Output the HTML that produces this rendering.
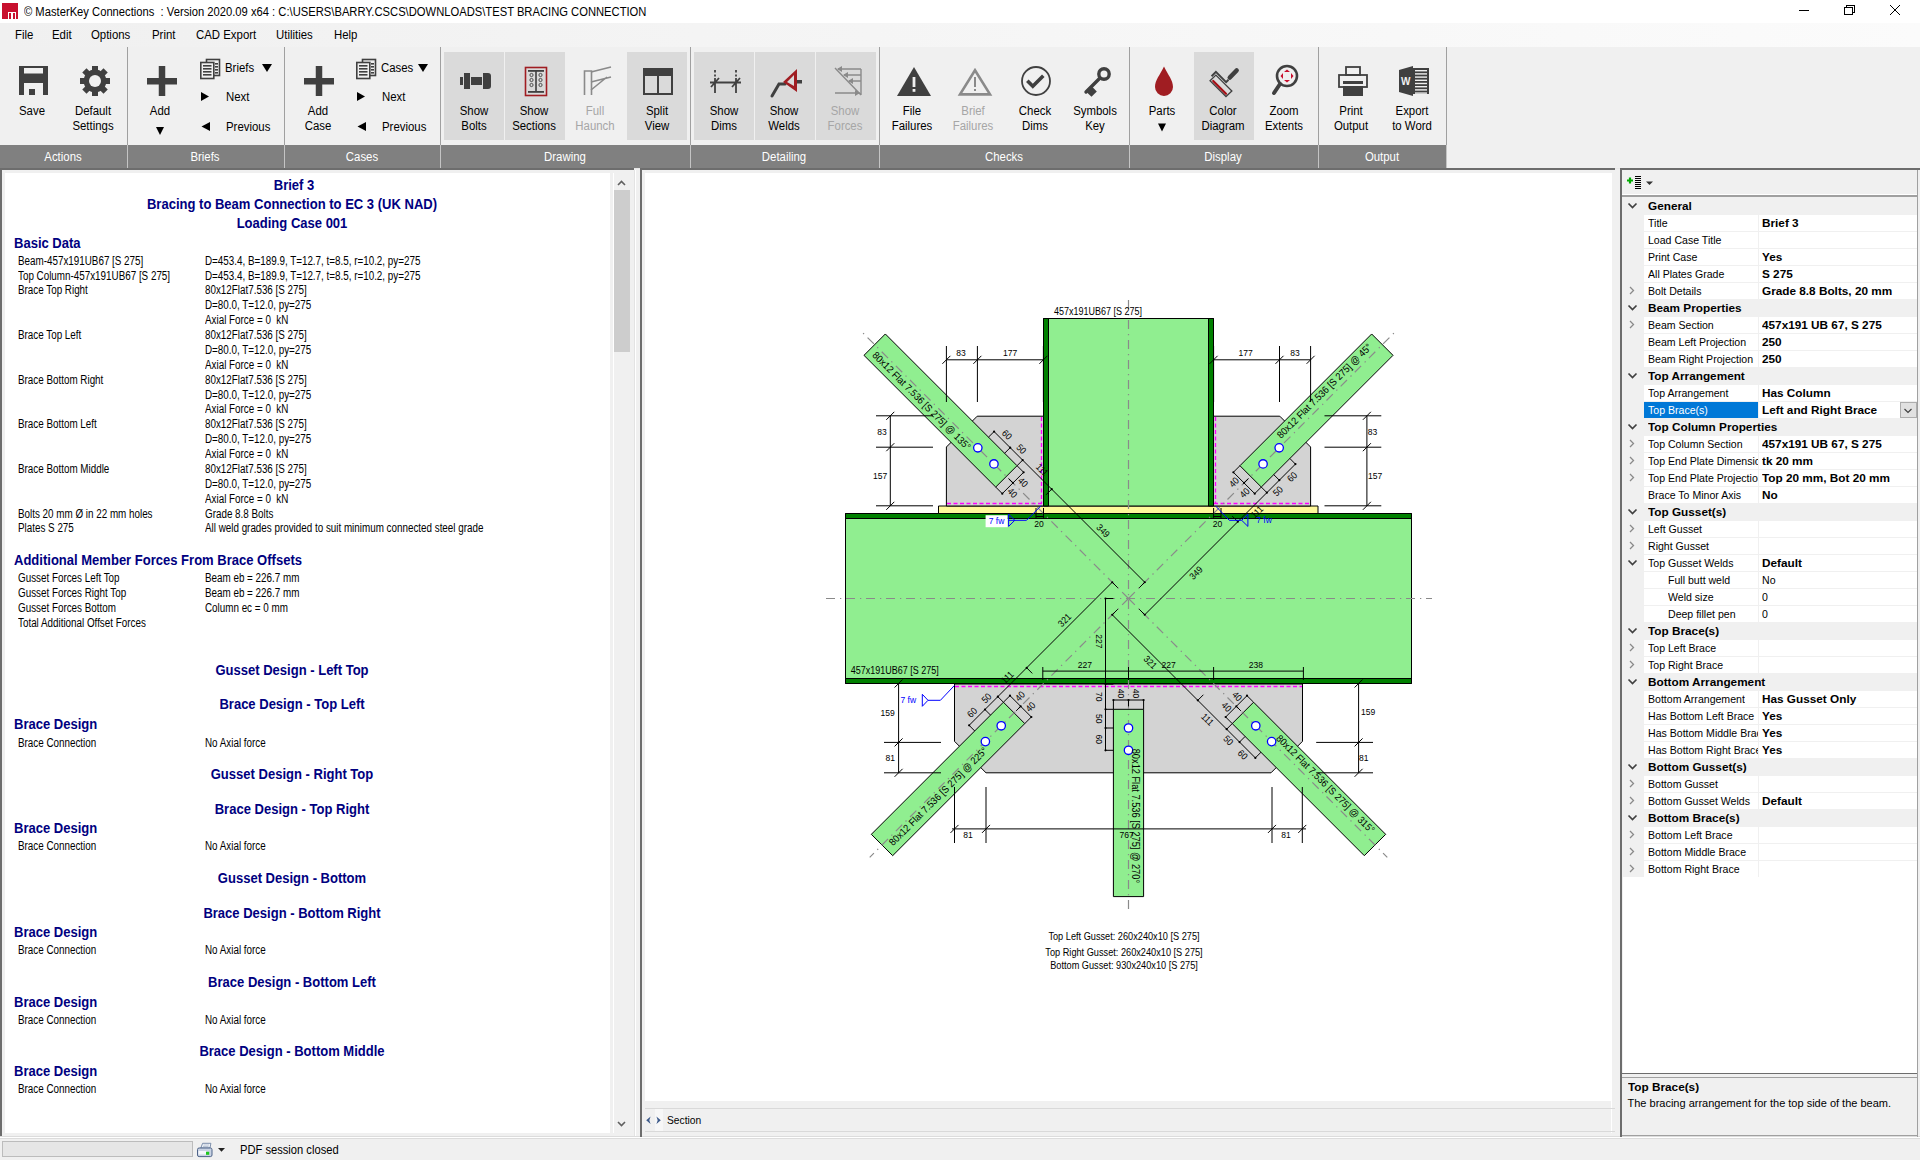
<!DOCTYPE html><html><head><meta charset="utf-8"><title>MasterKey Connections</title><style>
html,body{margin:0;padding:0;}
body{width:1920px;height:1160px;position:relative;overflow:hidden;background:#f0f0f0;font-family:"Liberation Sans",sans-serif;}
.t{position:absolute;white-space:pre;line-height:1;}
.r{position:absolute;}
svg.r{overflow:hidden;}
</style></head><body>
<div class="r" style="left:0px;top:0px;width:1920px;height:23px;background:#fff;"></div>
<svg class="r" style="left:0px;top:0px;" width="24" height="23" viewBox="0 0 24 23"><rect x="2" y="3" width="16" height="16" fill="#c8102e"/><rect x="8" y="12" width="8" height="7" fill="#fff"/><rect x="9" y="13" width="2" height="6" fill="#c8102e"/><rect x="13" y="13" width="2" height="6" fill="#c8102e"/></svg>
<div class="t" style="left:24px;top:5.84px;font-size:12px;transform: scaleX(0.934);transform-origin:left top;">© MasterKey Connections  : Version 2020.09 x64 : C:\USERS\BARRY.CSCS\DOWNLOADS\TEST BRACING CONNECTION</div>
<svg class="r" style="left:1790px;top:0px;" width="130" height="23" viewBox="1790 0 130 23"><g stroke="#000" stroke-width="1" fill="none" shape-rendering="crispEdges"><line x1="1799" y1="10.5" x2="1809" y2="10.5"/><rect x="1844.5" y="7.5" width="8" height="7"/><polyline points="1846.5,7.5 1846.5,5.5 1854.5,5.5 1854.5,12.5 1852.5,12.5"/></g><g stroke="#000" stroke-width="1" fill="none"><line x1="1890" y1="5" x2="1900" y2="15"/><line x1="1900" y1="5" x2="1890" y2="15"/></g></svg>
<div class="r" style="left:0px;top:23px;width:1920px;height:24px;background:linear-gradient(to right,#f0f0f0,#fbfbfb);"></div>
<div class="t" style="left:15px;top:28.84px;font-size:12px;transform: scaleX(0.95);transform-origin:left top;">File</div>
<div class="t" style="left:52px;top:28.84px;font-size:12px;transform: scaleX(0.95);transform-origin:left top;">Edit</div>
<div class="t" style="left:91px;top:28.84px;font-size:12px;transform: scaleX(0.95);transform-origin:left top;">Options</div>
<div class="t" style="left:152px;top:28.84px;font-size:12px;transform: scaleX(0.95);transform-origin:left top;">Print</div>
<div class="t" style="left:196px;top:28.84px;font-size:12px;transform: scaleX(0.95);transform-origin:left top;">CAD Export</div>
<div class="t" style="left:276px;top:28.84px;font-size:12px;transform: scaleX(0.95);transform-origin:left top;">Utilities</div>
<div class="t" style="left:334px;top:28.84px;font-size:12px;transform: scaleX(0.95);transform-origin:left top;">Help</div>
<div class="r" style="left:0px;top:47px;width:1920px;height:98px;background:#f0f0f0;"></div>
<div class="r" style="left:444px;top:52px;width:60px;height:88px;background:#dadada;"></div>
<div class="r" style="left:505px;top:52px;width:60px;height:88px;background:#dadada;"></div>
<div class="r" style="left:627px;top:52px;width:60px;height:88px;background:#dadada;"></div>
<div class="r" style="left:694px;top:52px;width:60px;height:88px;background:#dadada;"></div>
<div class="r" style="left:755px;top:52px;width:60px;height:88px;background:#dadada;"></div>
<div class="r" style="left:816px;top:52px;width:60px;height:88px;background:#dadada;"></div>
<div class="r" style="left:1194px;top:52px;width:60px;height:88px;background:#dadada;"></div>
<div class="r" style="left:0px;top:145px;width:1446px;height:23px;background:#808080;"></div>
<div class="r" style="left:127px;top:47px;width:1px;height:98px;background:#a0a0a0;"></div>
<div class="r" style="left:127px;top:145px;width:1px;height:23px;background:#c4c4c4;"></div>
<div class="r" style="left:284px;top:47px;width:1px;height:98px;background:#a0a0a0;"></div>
<div class="r" style="left:284px;top:145px;width:1px;height:23px;background:#c4c4c4;"></div>
<div class="r" style="left:440px;top:47px;width:1px;height:98px;background:#a0a0a0;"></div>
<div class="r" style="left:440px;top:145px;width:1px;height:23px;background:#c4c4c4;"></div>
<div class="r" style="left:690px;top:47px;width:1px;height:98px;background:#a0a0a0;"></div>
<div class="r" style="left:690px;top:145px;width:1px;height:23px;background:#c4c4c4;"></div>
<div class="r" style="left:879px;top:47px;width:1px;height:98px;background:#a0a0a0;"></div>
<div class="r" style="left:879px;top:145px;width:1px;height:23px;background:#c4c4c4;"></div>
<div class="r" style="left:1129px;top:47px;width:1px;height:98px;background:#a0a0a0;"></div>
<div class="r" style="left:1129px;top:145px;width:1px;height:23px;background:#c4c4c4;"></div>
<div class="r" style="left:1318px;top:47px;width:1px;height:98px;background:#a0a0a0;"></div>
<div class="r" style="left:1318px;top:145px;width:1px;height:23px;background:#c4c4c4;"></div>
<div class="r" style="left:1446px;top:47px;width:1px;height:98px;background:#a0a0a0;"></div>
<div class="r" style="left:1446px;top:145px;width:1px;height:23px;background:#c4c4c4;"></div>
<div class="t" style="left:63px;top:150.84px;font-size:12px;color:#fff;transform:translateX(-50%) scaleX(0.95);transform-origin:center top;">Actions</div>
<div class="t" style="left:205px;top:150.84px;font-size:12px;color:#fff;transform:translateX(-50%) scaleX(0.95);transform-origin:center top;">Briefs</div>
<div class="t" style="left:362px;top:150.84px;font-size:12px;color:#fff;transform:translateX(-50%) scaleX(0.95);transform-origin:center top;">Cases</div>
<div class="t" style="left:565px;top:150.84px;font-size:12px;color:#fff;transform:translateX(-50%) scaleX(0.95);transform-origin:center top;">Drawing</div>
<div class="t" style="left:784px;top:150.84px;font-size:12px;color:#fff;transform:translateX(-50%) scaleX(0.95);transform-origin:center top;">Detailing</div>
<div class="t" style="left:1004px;top:150.84px;font-size:12px;color:#fff;transform:translateX(-50%) scaleX(0.95);transform-origin:center top;">Checks</div>
<div class="t" style="left:1223px;top:150.84px;font-size:12px;color:#fff;transform:translateX(-50%) scaleX(0.95);transform-origin:center top;">Display</div>
<div class="t" style="left:1382px;top:150.84px;font-size:12px;color:#fff;transform:translateX(-50%) scaleX(0.95);transform-origin:center top;">Output</div>
<div class="t" style="left:32px;top:105.34px;font-size:12px;transform:translateX(-50%) scaleX(0.95);transform-origin:center top;">Save</div>
<div class="t" style="left:93px;top:105.34px;font-size:12px;transform:translateX(-50%) scaleX(0.95);transform-origin:center top;">Default</div>
<div class="t" style="left:93px;top:120.34px;font-size:12px;transform:translateX(-50%) scaleX(0.95);transform-origin:center top;">Settings</div>
<div class="t" style="left:160px;top:105.34px;font-size:12px;transform:translateX(-50%) scaleX(0.95);transform-origin:center top;">Add</div>
<div class="t" style="left:318px;top:105.34px;font-size:12px;transform:translateX(-50%) scaleX(0.95);transform-origin:center top;">Add</div>
<div class="t" style="left:318px;top:120.34px;font-size:12px;transform:translateX(-50%) scaleX(0.95);transform-origin:center top;">Case</div>
<div class="t" style="left:474px;top:105.34px;font-size:12px;transform:translateX(-50%) scaleX(0.95);transform-origin:center top;">Show</div>
<div class="t" style="left:474px;top:120.34px;font-size:12px;transform:translateX(-50%) scaleX(0.95);transform-origin:center top;">Bolts</div>
<div class="t" style="left:534px;top:105.34px;font-size:12px;transform:translateX(-50%) scaleX(0.95);transform-origin:center top;">Show</div>
<div class="t" style="left:534px;top:120.34px;font-size:12px;transform:translateX(-50%) scaleX(0.95);transform-origin:center top;">Sections</div>
<div class="t" style="left:595px;top:105.34px;font-size:12px;color:#a6a6a6;transform:translateX(-50%) scaleX(0.95);transform-origin:center top;">Full</div>
<div class="t" style="left:595px;top:120.34px;font-size:12px;color:#a6a6a6;transform:translateX(-50%) scaleX(0.95);transform-origin:center top;">Haunch</div>
<div class="t" style="left:657px;top:105.34px;font-size:12px;transform:translateX(-50%) scaleX(0.95);transform-origin:center top;">Split</div>
<div class="t" style="left:657px;top:120.34px;font-size:12px;transform:translateX(-50%) scaleX(0.95);transform-origin:center top;">View</div>
<div class="t" style="left:724px;top:105.34px;font-size:12px;transform:translateX(-50%) scaleX(0.95);transform-origin:center top;">Show</div>
<div class="t" style="left:724px;top:120.34px;font-size:12px;transform:translateX(-50%) scaleX(0.95);transform-origin:center top;">Dims</div>
<div class="t" style="left:784px;top:105.34px;font-size:12px;transform:translateX(-50%) scaleX(0.95);transform-origin:center top;">Show</div>
<div class="t" style="left:784px;top:120.34px;font-size:12px;transform:translateX(-50%) scaleX(0.95);transform-origin:center top;">Welds</div>
<div class="t" style="left:845px;top:105.34px;font-size:12px;color:#a6a6a6;transform:translateX(-50%) scaleX(0.95);transform-origin:center top;">Show</div>
<div class="t" style="left:845px;top:120.34px;font-size:12px;color:#a6a6a6;transform:translateX(-50%) scaleX(0.95);transform-origin:center top;">Forces</div>
<div class="t" style="left:912px;top:105.34px;font-size:12px;transform:translateX(-50%) scaleX(0.95);transform-origin:center top;">File</div>
<div class="t" style="left:912px;top:120.34px;font-size:12px;transform:translateX(-50%) scaleX(0.95);transform-origin:center top;">Failures</div>
<div class="t" style="left:973px;top:105.34px;font-size:12px;color:#a6a6a6;transform:translateX(-50%) scaleX(0.95);transform-origin:center top;">Brief</div>
<div class="t" style="left:973px;top:120.34px;font-size:12px;color:#a6a6a6;transform:translateX(-50%) scaleX(0.95);transform-origin:center top;">Failures</div>
<div class="t" style="left:1035px;top:105.34px;font-size:12px;transform:translateX(-50%) scaleX(0.95);transform-origin:center top;">Check</div>
<div class="t" style="left:1035px;top:120.34px;font-size:12px;transform:translateX(-50%) scaleX(0.95);transform-origin:center top;">Dims</div>
<div class="t" style="left:1095px;top:105.34px;font-size:12px;transform:translateX(-50%) scaleX(0.95);transform-origin:center top;">Symbols</div>
<div class="t" style="left:1095px;top:120.34px;font-size:12px;transform:translateX(-50%) scaleX(0.95);transform-origin:center top;">Key</div>
<div class="t" style="left:1162px;top:105.34px;font-size:12px;transform:translateX(-50%) scaleX(0.95);transform-origin:center top;">Parts</div>
<div class="t" style="left:1223px;top:105.34px;font-size:12px;transform:translateX(-50%) scaleX(0.95);transform-origin:center top;">Color</div>
<div class="t" style="left:1223px;top:120.34px;font-size:12px;transform:translateX(-50%) scaleX(0.95);transform-origin:center top;">Diagram</div>
<div class="t" style="left:1284px;top:105.34px;font-size:12px;transform:translateX(-50%) scaleX(0.95);transform-origin:center top;">Zoom</div>
<div class="t" style="left:1284px;top:120.34px;font-size:12px;transform:translateX(-50%) scaleX(0.95);transform-origin:center top;">Extents</div>
<div class="t" style="left:1351px;top:105.34px;font-size:12px;transform:translateX(-50%) scaleX(0.95);transform-origin:center top;">Print</div>
<div class="t" style="left:1351px;top:120.34px;font-size:12px;transform:translateX(-50%) scaleX(0.95);transform-origin:center top;">Output</div>
<div class="t" style="left:1412px;top:105.34px;font-size:12px;transform:translateX(-50%) scaleX(0.95);transform-origin:center top;">Export</div>
<div class="t" style="left:1412px;top:120.34px;font-size:12px;transform:translateX(-50%) scaleX(0.95);transform-origin:center top;">to Word</div>
<div class="t" style="left:225px;top:61.84px;font-size:12px;transform: scaleX(0.95);transform-origin:left top;">Briefs</div>
<div class="t" style="left:226px;top:90.84px;font-size:12px;transform: scaleX(0.95);transform-origin:left top;">Next</div>
<div class="t" style="left:226px;top:120.84px;font-size:12px;transform: scaleX(0.95);transform-origin:left top;">Previous</div>
<div class="t" style="left:381px;top:61.84px;font-size:12px;transform: scaleX(0.95);transform-origin:left top;">Cases</div>
<div class="t" style="left:382px;top:90.84px;font-size:12px;transform: scaleX(0.95);transform-origin:left top;">Next</div>
<div class="t" style="left:382px;top:120.84px;font-size:12px;transform: scaleX(0.95);transform-origin:left top;">Previous</div>
<svg class="r" style="left:0px;top:47px;" width="1446" height="98" viewBox="0 47 1446 98"><path d="M19 66h29v29h-29z M24 68v5.6h19v-5.6z M24 83v12h19v-12z" fill="#404040" fill-rule="evenodd"/><rect x="29" y="89" width="6" height="6" fill="#404040"/><g fill="#404040"><rect x="92" y="66" width="6" height="8" transform="rotate(0 95 81)"/><rect x="92" y="66" width="6" height="8" transform="rotate(45 95 81)"/><rect x="92" y="66" width="6" height="8" transform="rotate(90 95 81)"/><rect x="92" y="66" width="6" height="8" transform="rotate(135 95 81)"/><rect x="92" y="66" width="6" height="8" transform="rotate(180 95 81)"/><rect x="92" y="66" width="6" height="8" transform="rotate(225 95 81)"/><rect x="92" y="66" width="6" height="8" transform="rotate(270 95 81)"/><rect x="92" y="66" width="6" height="8" transform="rotate(315 95 81)"/><circle cx="95" cy="81" r="11.4"/></g><circle cx="95" cy="81" r="6" fill="#f0f0f0"/><rect x="147" y="78" width="30" height="6.5" fill="#404040"/><rect x="158.75" y="66" width="6.5" height="30" fill="#404040"/><rect x="304" y="78" width="30" height="6.5" fill="#404040"/><rect x="315.75" y="66" width="6.5" height="30" fill="#404040"/><path d="M156 127h8l-4 8z" fill="#000"/><path d="M1158 123.5h8l-4 8z" fill="#000"/><rect x="206.5" y="59.5" width="13" height="16" fill="#f0f0f0" stroke="#404040" stroke-width="1.6"/><rect x="200.8" y="62.5" width="13" height="16" fill="#f0f0f0" stroke="#404040" stroke-width="1.6"/><rect x="203" y="65" width="8.5" height="1.6" fill="#404040"/><rect x="203" y="68" width="8.5" height="1.6" fill="#404040"/><rect x="203" y="71" width="8.5" height="1.6" fill="#404040"/><rect x="203" y="74" width="8.5" height="1.6" fill="#404040"/><rect x="215" y="63" width="3" height="1.6" fill="#404040"/><rect x="215" y="66" width="3" height="1.6" fill="#404040"/><rect x="215" y="69" width="3" height="1.6" fill="#404040"/><rect x="215" y="72" width="3" height="1.6" fill="#404040"/><path d="M262 64h10l-5 8z" fill="#000"/><path d="M201 92v9l8-4.5z" fill="#000"/><path d="M210 122v9l-8.5-4.5z" fill="#000"/><rect x="362.5" y="59.5" width="13" height="16" fill="#f0f0f0" stroke="#404040" stroke-width="1.6"/><rect x="356.8" y="62.5" width="13" height="16" fill="#f0f0f0" stroke="#404040" stroke-width="1.6"/><rect x="359" y="65" width="8.5" height="1.6" fill="#404040"/><rect x="359" y="68" width="8.5" height="1.6" fill="#404040"/><rect x="359" y="71" width="8.5" height="1.6" fill="#404040"/><rect x="359" y="74" width="8.5" height="1.6" fill="#404040"/><rect x="371" y="63" width="3" height="1.6" fill="#404040"/><rect x="371" y="66" width="3" height="1.6" fill="#404040"/><rect x="371" y="69" width="3" height="1.6" fill="#404040"/><rect x="371" y="72" width="3" height="1.6" fill="#404040"/><path d="M418 64h10l-5 8z" fill="#000"/><path d="M357 92v9l8-4.5z" fill="#000"/><path d="M366 122v9l-8.5-4.5z" fill="#000"/><rect x="460" y="77" width="3" height="8" fill="#404040"/><rect x="464" y="73" width="6" height="16" fill="#404040"/><rect x="471" y="77" width="11" height="8" fill="#404040"/><path d="M483 73h5a3 3 0 0 1 3 3v10a3 3 0 0 1-3 3h-5z" fill="#404040"/><rect x="525.5" y="67.5" width="21" height="28" fill="none" stroke="#a01d22" stroke-width="1.6"/><rect x="528" y="70" width="16" height="1.8" fill="#404040"/><rect x="528" y="91" width="16" height="1.8" fill="#404040"/><rect x="535.2" y="71" width="1.6" height="21" fill="#404040"/><circle cx="531.5" cy="75" r="1.6" fill="none" stroke="#404040" stroke-width="0.9"/><circle cx="531.5" cy="80" r="1.6" fill="none" stroke="#404040" stroke-width="0.9"/><circle cx="531.5" cy="85" r="1.6" fill="none" stroke="#404040" stroke-width="0.9"/><circle cx="540.5" cy="75" r="1.6" fill="none" stroke="#404040" stroke-width="0.9"/><circle cx="540.5" cy="80" r="1.6" fill="none" stroke="#404040" stroke-width="0.9"/><circle cx="540.5" cy="85" r="1.6" fill="none" stroke="#404040" stroke-width="0.9"/><g fill="none" stroke="#8a8a8a" stroke-width="1.6"><path d="M584.5 95V71h7v24"/><path d="M591 72l20-5M591 82l20-5M591 90l16-13"/></g><rect x="643" y="68" width="30" height="27" fill="#404040"/><rect x="645" y="76" width="12" height="17" fill="#dadada"/><rect x="659" y="76" width="12" height="17" fill="#dadada"/><g stroke="#404040" stroke-width="1.8" fill="none"><path d="M710 82.5h31M715 70v2.5M715 74.5v2M715 78v15M736 70v2.5M736 74.5v2M736 78v15M711 87l8-9M732 87l8-9"/></g><path d="M772 96l7-12h6" fill="none" stroke="#404040" stroke-width="3" stroke-linecap="round"/><path d="M797 69l0 23l-14-10z M794 75l-7 7l7 4z" fill="#a01d22" fill-rule="evenodd"/><rect x="797" y="80" width="5" height="3.5" fill="#404040"/><g fill="none" stroke="#8a8a8a" stroke-width="1.4"><path d="M835 68l26 27M861 69v26M838 69h23M844 75h17M849 81h12M835 93h25"/></g><g fill="#8a8a8a"><path d="M837 69l5-3v6z M843 75l5-3v6z M848 81l5-3v6z M860 93l-5-3v6z"/></g><path d="M914 67l17 29h-34z" fill="#404040"/><rect x="912.6" y="77" width="2.8" height="10" fill="#f0f0f0"/><rect x="912.6" y="89" width="2.8" height="2.8" fill="#f0f0f0"/><path d="M975 70.2L990 94.4H960Z" fill="none" stroke="#8a8a8a" stroke-width="2.6" stroke-linejoin="miter"/><rect x="974" y="77" width="2" height="10" fill="#8a8a8a"/><rect x="974" y="89" width="2" height="2" fill="#8a8a8a"/><circle cx="1036" cy="81" r="14" fill="none" stroke="#404040" stroke-width="1.8"/><path d="M1027.3 80.8l5.5 5.5l10.5-10.5" fill="none" stroke="#404040" stroke-width="3.6"/><circle cx="1104" cy="74" r="5.2" fill="none" stroke="#404040" stroke-width="3.4"/><path d="M1100 78l-14 14" stroke="#404040" stroke-width="3.4" stroke-linecap="round"/><rect x="0" y="-3.8" width="7" height="7.6" fill="#404040" transform="translate(1089.2 89.2) rotate(45)"/><path d="M1164 66.5C1160 75 1155 80 1155 87a9 9 0 0 0 18 0c0-7-5-12-9-20.5z" fill="#a01d22"/><polygon points="1210.05,80.76 1215.9,75.07 1231.87,91 1226,96.5" fill="#dadada" stroke="#404040" stroke-width="1.3"/><line x1="1213.2" y1="81" x2="1226" y2="93.8" stroke="#a50f15" stroke-width="2.2" stroke-linecap="round"/><path d="M1211.6 76.3L1215.9 71.9L1226.1 82.1L1228.5 79.7" fill="none" stroke="#404040" stroke-width="2"/><line x1="1229.8" y1="77.5" x2="1236.6" y2="70.5" stroke="#404040" stroke-width="4.6" stroke-linecap="round"/><circle cx="1287" cy="76" r="10" fill="none" stroke="#404040" stroke-width="2.6"/><path d="M1280 84l-6 9" stroke="#404040" stroke-width="4" stroke-linecap="round"/><path d="M1287 69.5l3 2.5h-6z M1287 82.5l3-2.5h-6z M1280.5 76l2.5-3v6z M1293.5 76l-2.5-3v6z" fill="#c8102e"/><rect x="1346" y="67" width="14" height="8" fill="none" stroke="#404040" stroke-width="1.8"/><rect x="1339" y="75" width="28" height="12" fill="none" stroke="#404040" stroke-width="1.8"/><rect x="1343" y="81" width="20" height="3" fill="#404040"/><rect x="1343" y="86" width="20" height="10" fill="#404040"/><path d="M1399 70l14-4v30l-14-4z" fill="#404040"/><rect x="1413" y="68" width="16" height="26" fill="#404040"/><rect x="1415" y="70.0" width="12" height="1.4" fill="#f0f0f0"/><rect x="1415" y="73.2" width="12" height="1.4" fill="#f0f0f0"/><rect x="1415" y="76.4" width="12" height="1.4" fill="#f0f0f0"/><rect x="1415" y="79.6" width="12" height="1.4" fill="#f0f0f0"/><rect x="1415" y="82.8" width="12" height="1.4" fill="#f0f0f0"/><rect x="1415" y="86.0" width="12" height="1.4" fill="#f0f0f0"/><rect x="1415" y="89.2" width="12" height="1.4" fill="#f0f0f0"/><rect x="1415" y="92.4" width="12" height="1.4" fill="#f0f0f0"/><text x="1401" y="85" font-family="Liberation Sans" font-size="10" font-weight="bold" fill="#f0f0f0">W</text></svg>
<div class="r" style="left:0px;top:168px;width:1920px;height:1px;background:#e8e8e8;"></div>
<div class="r" style="left:0px;top:168px;width:634px;height:2px;background:#6d6d6d;"></div>
<div class="r" style="left:0px;top:168px;width:2px;height:969px;background:#6d6d6d;"></div>
<div class="r" style="left:5px;top:173px;width:605px;height:960px;background:#fff;"></div>
<div class="r" style="left:613px;top:173px;width:1px;height:960px;background:#fff;"></div>
<div class="r" style="left:634px;top:170px;width:1px;height:967px;background:#e3e3e3;"></div>
<div class="r" style="left:635px;top:170px;width:1px;height:967px;background:#fff;"></div>
<div class="r" style="left:614px;top:190px;width:16px;height:162px;background:#cdcdcd;"></div>
<svg class="r" style="left:610px;top:170px;" width="30" height="970" viewBox="610 170 30 970"><path d="M618 185l3.5-3.5l3.5 3.5" fill="none" stroke="#606060" stroke-width="1.6"/><path d="M618 1122l3.5 3.5l3.5-3.5" fill="none" stroke="#606060" stroke-width="1.6"/></svg>
<div class="r" style="left:0px;top:1136px;width:1920px;height:1px;background:#dcdcdc;"></div>
<div class="r" style="left:0px;top:1137px;width:1920px;height:1px;background:#fff;"></div>
<div class="r" style="left:0px;top:1138px;width:1920px;height:1px;background:#dcdcdc;"></div>
<div class="r" style="left:640px;top:168px;width:975px;height:2px;background:#6d6d6d;"></div>
<div class="r" style="left:640px;top:168px;width:2px;height:969px;background:#6d6d6d;"></div>
<div class="r" style="left:645px;top:173px;width:966px;height:928px;background:#fff;"></div>
<div class="r" style="left:1611px;top:173px;width:1px;height:960px;background:#fff;"></div>
<div class="r" style="left:645px;top:1108px;width:970px;height:1px;background:#d9d9d9;"></div>
<div class="r" style="left:645px;top:1131px;width:970px;height:1px;background:#d9d9d9;"></div>
<div class="r" style="left:655px;top:1109px;width:8px;height:22px;background:#f7f7f7;"></div>
<svg class="r" style="left:645px;top:1108px;" width="60" height="24" viewBox="645 1108 60 24"><path d="M650.6 1116.5L646.2 1120.2L650.6 1123.9L649.3 1120.2Z" fill="#3d5a8a"/><path d="M656.4 1116.5L660.8 1120.2L656.4 1123.9L657.7 1120.2Z" fill="#3d5a8a"/></svg>
<div class="t" style="left:667px;top:1115.49px;font-size:11px;transform: scaleX(0.93);transform-origin:left top;">Section</div>
<div class="r" style="left:1620px;top:168px;width:300px;height:2px;background:#6d6d6d;"></div>
<div class="r" style="left:1620px;top:168px;width:2px;height:969px;background:#6d6d6d;"></div>
<div class="r" style="left:1917px;top:170px;width:1px;height:967px;background:#a0a0a0;"></div>
<div class="r" style="left:1622px;top:194px;width:295px;height:1px;background:#fff;"></div>
<div class="r" style="left:1622px;top:195px;width:295px;height:2px;background:#a0a0a0;"></div>
<div class="r" style="left:1623px;top:197px;width:294px;height:876px;background:#fff;"></div>
<div class="r" style="left:1622px;top:1073px;width:295px;height:1px;background:#6d6d6d;"></div>
<div class="r" style="left:1622px;top:1077px;width:296px;height:1px;background:#a0a0a0;"></div>
<div class="r" style="left:1622px;top:1135px;width:296px;height:1px;background:#a0a0a0;"></div>
<svg class="r" style="left:1622px;top:170px;" width="50" height="25" viewBox="1622 170 50 25"><path d="M1627 180.5h6M1630 177.5v6" stroke="#0a0" stroke-width="2.2"/><rect x="1635" y="176" width="6" height="1" fill="#000"/><rect x="1635" y="178" width="6" height="1" fill="#000"/><rect x="1635" y="180" width="6" height="1" fill="#000"/><rect x="1635" y="182" width="6" height="1" fill="#000"/><rect x="1635" y="184" width="6" height="1" fill="#000"/><rect x="1635" y="186" width="6" height="1" fill="#000"/><rect x="1635" y="188" width="6" height="1" fill="#000"/><path d="M1646 181.5h7l-3.5 3.5z" fill="#333"/></svg>
<div class="r" style="left:2px;top:1141px;width:191px;height:16px;background:#e6e6e6;box-sizing:border-box;border:1px solid #bcbcbc;"></div>
<svg class="r" style="left:195px;top:1139px;" width="40" height="20" viewBox="195 1139 40 20"><path d="M200.8 1148L202.6 1143.3H210.9L210 1148Z" fill="#eef2f8" stroke="#6f83a3" stroke-width="0.9"/><path d="M203.5 1145h5.5M203 1146.5h5.5" stroke="#9aa8c0" stroke-width="0.6"/><rect x="197.5" y="1148" width="14.5" height="8.6" rx="1.6" fill="#c9d3e3" stroke="#4d6288" stroke-width="1"/><rect x="198.5" y="1151" width="8" height="3.5" fill="#f4f6fb"/><rect x="206" y="1151.8" width="3.2" height="3" fill="#1ec81e"/><path d="M218 1148h7l-3.5 3.8z" fill="#222"/></svg>
<div class="t" style="left:240px;top:1143.84px;font-size:12px;transform: scaleX(0.93);transform-origin:left top;">PDF session closed</div>
<div class="t" style="left:293.5px;top:177.75px;font-size:14px;color:#000080;font-weight:bold;transform:translateX(-50%) scaleX(0.93);transform-origin:center top;">Brief 3</div>
<div class="t" style="left:291.5px;top:197.35px;font-size:14px;color:#000080;font-weight:bold;transform:translateX(-50%) scaleX(0.93);transform-origin:center top;">Bracing to Beam Connection to EC 3 (UK NAD)</div>
<div class="t" style="left:291.5px;top:216.45px;font-size:14px;color:#000080;font-weight:bold;transform:translateX(-50%) scaleX(0.93);transform-origin:center top;">Loading Case 001</div>
<div class="t" style="left:13.5px;top:236.05px;font-size:14px;color:#000080;font-weight:bold;transform: scaleX(0.93);transform-origin:left top;">Basic Data</div>
<div class="t" style="left:18px;top:254.74px;font-size:12px;transform: scaleX(0.82);transform-origin:left top;">Beam-457x191UB67 [S 275]</div>
<div class="t" style="left:205px;top:254.74px;font-size:12px;transform: scaleX(0.82);transform-origin:left top;">D=453.4, B=189.9, T=12.7, t=8.5, r=10.2, py=275</div>
<div class="t" style="left:18px;top:269.61px;font-size:12px;transform: scaleX(0.82);transform-origin:left top;">Top Column-457x191UB67 [S 275]</div>
<div class="t" style="left:205px;top:269.61px;font-size:12px;transform: scaleX(0.82);transform-origin:left top;">D=453.4, B=189.9, T=12.7, t=8.5, r=10.2, py=275</div>
<div class="t" style="left:18px;top:284.48px;font-size:12px;transform: scaleX(0.82);transform-origin:left top;">Brace Top Right</div>
<div class="t" style="left:205px;top:284.48px;font-size:12px;transform: scaleX(0.82);transform-origin:left top;">80x12Flat7.536 [S 275]</div>
<div class="t" style="left:205px;top:299.35px;font-size:12px;transform: scaleX(0.82);transform-origin:left top;">D=80.0, T=12.0, py=275</div>
<div class="t" style="left:205px;top:314.22px;font-size:12px;transform: scaleX(0.82);transform-origin:left top;">Axial Force = 0  kN</div>
<div class="t" style="left:18px;top:329.09px;font-size:12px;transform: scaleX(0.82);transform-origin:left top;">Brace Top Left</div>
<div class="t" style="left:205px;top:329.09px;font-size:12px;transform: scaleX(0.82);transform-origin:left top;">80x12Flat7.536 [S 275]</div>
<div class="t" style="left:205px;top:343.96px;font-size:12px;transform: scaleX(0.82);transform-origin:left top;">D=80.0, T=12.0, py=275</div>
<div class="t" style="left:205px;top:358.83px;font-size:12px;transform: scaleX(0.82);transform-origin:left top;">Axial Force = 0  kN</div>
<div class="t" style="left:18px;top:373.70px;font-size:12px;transform: scaleX(0.82);transform-origin:left top;">Brace Bottom Right</div>
<div class="t" style="left:205px;top:373.70px;font-size:12px;transform: scaleX(0.82);transform-origin:left top;">80x12Flat7.536 [S 275]</div>
<div class="t" style="left:205px;top:388.57px;font-size:12px;transform: scaleX(0.82);transform-origin:left top;">D=80.0, T=12.0, py=275</div>
<div class="t" style="left:205px;top:403.44px;font-size:12px;transform: scaleX(0.82);transform-origin:left top;">Axial Force = 0  kN</div>
<div class="t" style="left:18px;top:418.31px;font-size:12px;transform: scaleX(0.82);transform-origin:left top;">Brace Bottom Left</div>
<div class="t" style="left:205px;top:418.31px;font-size:12px;transform: scaleX(0.82);transform-origin:left top;">80x12Flat7.536 [S 275]</div>
<div class="t" style="left:205px;top:433.18px;font-size:12px;transform: scaleX(0.82);transform-origin:left top;">D=80.0, T=12.0, py=275</div>
<div class="t" style="left:205px;top:448.05px;font-size:12px;transform: scaleX(0.82);transform-origin:left top;">Axial Force = 0  kN</div>
<div class="t" style="left:18px;top:462.92px;font-size:12px;transform: scaleX(0.82);transform-origin:left top;">Brace Bottom Middle</div>
<div class="t" style="left:205px;top:462.92px;font-size:12px;transform: scaleX(0.82);transform-origin:left top;">80x12Flat7.536 [S 275]</div>
<div class="t" style="left:205px;top:477.79px;font-size:12px;transform: scaleX(0.82);transform-origin:left top;">D=80.0, T=12.0, py=275</div>
<div class="t" style="left:205px;top:492.66px;font-size:12px;transform: scaleX(0.82);transform-origin:left top;">Axial Force = 0  kN</div>
<div class="t" style="left:18px;top:507.53px;font-size:12px;transform: scaleX(0.82);transform-origin:left top;">Bolts 20 mm Ø in 22 mm holes</div>
<div class="t" style="left:205px;top:507.53px;font-size:12px;transform: scaleX(0.82);transform-origin:left top;">Grade 8.8 Bolts</div>
<div class="t" style="left:18px;top:522.40px;font-size:12px;transform: scaleX(0.82);transform-origin:left top;">Plates S 275</div>
<div class="t" style="left:205px;top:522.40px;font-size:12px;transform: scaleX(0.82);transform-origin:left top;">All weld grades provided to suit minimum connected steel grade</div>
<div class="t" style="left:13.5px;top:553.15px;font-size:14px;color:#000080;font-weight:bold;transform: scaleX(0.93);transform-origin:left top;">Additional Member Forces From Brace Offsets</div>
<div class="t" style="left:18px;top:572.34px;font-size:12px;transform: scaleX(0.82);transform-origin:left top;">Gusset Forces Left Top</div>
<div class="t" style="left:205px;top:572.34px;font-size:12px;transform: scaleX(0.82);transform-origin:left top;">Beam eb = 226.7 mm</div>
<div class="t" style="left:18px;top:587.07px;font-size:12px;transform: scaleX(0.82);transform-origin:left top;">Gusset Forces Right Top</div>
<div class="t" style="left:205px;top:587.07px;font-size:12px;transform: scaleX(0.82);transform-origin:left top;">Beam eb = 226.7 mm</div>
<div class="t" style="left:18px;top:601.80px;font-size:12px;transform: scaleX(0.82);transform-origin:left top;">Gusset Forces Bottom</div>
<div class="t" style="left:205px;top:601.80px;font-size:12px;transform: scaleX(0.82);transform-origin:left top;">Column ec = 0 mm</div>
<div class="t" style="left:18px;top:616.53px;font-size:12px;transform: scaleX(0.82);transform-origin:left top;">Total Additional Offset Forces</div>
<div class="t" style="left:291.5px;top:663.15px;font-size:14px;color:#000080;font-weight:bold;transform:translateX(-50%) scaleX(0.93);transform-origin:center top;">Gusset Design - Left Top</div>
<div class="t" style="left:291.5px;top:697.45px;font-size:14px;color:#000080;font-weight:bold;transform:translateX(-50%) scaleX(0.93);transform-origin:center top;">Brace Design - Top Left</div>
<div class="t" style="left:13.5px;top:717.45px;font-size:14px;color:#000080;font-weight:bold;transform: scaleX(0.93);transform-origin:left top;">Brace Design</div>
<div class="t" style="left:18px;top:736.54px;font-size:12px;transform: scaleX(0.82);transform-origin:left top;">Brace Connection</div>
<div class="t" style="left:205px;top:736.54px;font-size:12px;transform: scaleX(0.82);transform-origin:left top;">No Axial force</div>
<div class="t" style="left:291.5px;top:767.45px;font-size:14px;color:#000080;font-weight:bold;transform:translateX(-50%) scaleX(0.93);transform-origin:center top;">Gusset Design - Right Top</div>
<div class="t" style="left:291.5px;top:802.15px;font-size:14px;color:#000080;font-weight:bold;transform:translateX(-50%) scaleX(0.93);transform-origin:center top;">Brace Design - Top Right</div>
<div class="t" style="left:13.5px;top:821.45px;font-size:14px;color:#000080;font-weight:bold;transform: scaleX(0.93);transform-origin:left top;">Brace Design</div>
<div class="t" style="left:18px;top:839.84px;font-size:12px;transform: scaleX(0.82);transform-origin:left top;">Brace Connection</div>
<div class="t" style="left:205px;top:839.84px;font-size:12px;transform: scaleX(0.82);transform-origin:left top;">No Axial force</div>
<div class="t" style="left:291.5px;top:871.45px;font-size:14px;color:#000080;font-weight:bold;transform:translateX(-50%) scaleX(0.93);transform-origin:center top;">Gusset Design - Bottom</div>
<div class="t" style="left:291.5px;top:906.45px;font-size:14px;color:#000080;font-weight:bold;transform:translateX(-50%) scaleX(0.93);transform-origin:center top;">Brace Design - Bottom Right</div>
<div class="t" style="left:13.5px;top:924.85px;font-size:14px;color:#000080;font-weight:bold;transform: scaleX(0.93);transform-origin:left top;">Brace Design</div>
<div class="t" style="left:18px;top:944.24px;font-size:12px;transform: scaleX(0.82);transform-origin:left top;">Brace Connection</div>
<div class="t" style="left:205px;top:944.24px;font-size:12px;transform: scaleX(0.82);transform-origin:left top;">No Axial force</div>
<div class="t" style="left:291.5px;top:975.15px;font-size:14px;color:#000080;font-weight:bold;transform:translateX(-50%) scaleX(0.93);transform-origin:center top;">Brace Design - Bottom Left</div>
<div class="t" style="left:13.5px;top:995.05px;font-size:14px;color:#000080;font-weight:bold;transform: scaleX(0.93);transform-origin:left top;">Brace Design</div>
<div class="t" style="left:18px;top:1014.34px;font-size:12px;transform: scaleX(0.82);transform-origin:left top;">Brace Connection</div>
<div class="t" style="left:205px;top:1014.34px;font-size:12px;transform: scaleX(0.82);transform-origin:left top;">No Axial force</div>
<div class="t" style="left:291.5px;top:1043.75px;font-size:14px;color:#000080;font-weight:bold;transform:translateX(-50%) scaleX(0.93);transform-origin:center top;">Brace Design - Bottom Middle</div>
<div class="t" style="left:13.5px;top:1064.35px;font-size:14px;color:#000080;font-weight:bold;transform: scaleX(0.93);transform-origin:left top;">Brace Design</div>
<div class="t" style="left:18px;top:1082.94px;font-size:12px;transform: scaleX(0.82);transform-origin:left top;">Brace Connection</div>
<div class="t" style="left:205px;top:1082.94px;font-size:12px;transform: scaleX(0.82);transform-origin:left top;">No Axial force</div>
<div class="r" style="left:1623px;top:197px;width:294px;height:17px;background:#f0f0f0;"></div>
<div class="t" style="left:1648px;top:201.19px;font-size:11px;font-weight:bold;transform: scaleX(1.07);transform-origin:left top;">General</div>
<div class="r" style="left:1623px;top:214px;width:21px;height:17px;background:#f0f0f0;"></div>
<div class="r" style="left:1644px;top:214px;width:273px;height:1px;background:#f0f0f0;"></div>
<div class="r" style="left:1758px;top:214px;width:1px;height:17px;background:#f0f0f0;"></div>
<div class="r" style="left:1644px;top:214px;width:114px;height:17px;overflow:hidden;">
<div class="t" style="left:3.5px;top:4.19px;font-size:11px;transform: scaleX(0.96);transform-origin:left top;">Title</div>
</div>
<div class="t" style="left:1761.5px;top:218.19px;font-size:11px;font-weight:bold;transform: scaleX(1.07);transform-origin:left top;">Brief 3</div>
<div class="r" style="left:1623px;top:231px;width:21px;height:17px;background:#f0f0f0;"></div>
<div class="r" style="left:1644px;top:231px;width:273px;height:1px;background:#f0f0f0;"></div>
<div class="r" style="left:1758px;top:231px;width:1px;height:17px;background:#f0f0f0;"></div>
<div class="r" style="left:1644px;top:231px;width:114px;height:17px;overflow:hidden;">
<div class="t" style="left:3.5px;top:4.19px;font-size:11px;transform: scaleX(0.96);transform-origin:left top;">Load Case Title</div>
</div>
<div class="r" style="left:1623px;top:248px;width:21px;height:17px;background:#f0f0f0;"></div>
<div class="r" style="left:1644px;top:248px;width:273px;height:1px;background:#f0f0f0;"></div>
<div class="r" style="left:1758px;top:248px;width:1px;height:17px;background:#f0f0f0;"></div>
<div class="r" style="left:1644px;top:248px;width:114px;height:17px;overflow:hidden;">
<div class="t" style="left:3.5px;top:4.19px;font-size:11px;transform: scaleX(0.96);transform-origin:left top;">Print Case</div>
</div>
<div class="t" style="left:1761.5px;top:252.19px;font-size:11px;font-weight:bold;transform: scaleX(1.07);transform-origin:left top;">Yes</div>
<div class="r" style="left:1623px;top:265px;width:21px;height:17px;background:#f0f0f0;"></div>
<div class="r" style="left:1644px;top:265px;width:273px;height:1px;background:#f0f0f0;"></div>
<div class="r" style="left:1758px;top:265px;width:1px;height:17px;background:#f0f0f0;"></div>
<div class="r" style="left:1644px;top:265px;width:114px;height:17px;overflow:hidden;">
<div class="t" style="left:3.5px;top:4.19px;font-size:11px;transform: scaleX(0.96);transform-origin:left top;">All Plates Grade</div>
</div>
<div class="t" style="left:1761.5px;top:269.19px;font-size:11px;font-weight:bold;transform: scaleX(1.07);transform-origin:left top;">S 275</div>
<div class="r" style="left:1623px;top:282px;width:21px;height:17px;background:#f0f0f0;"></div>
<div class="r" style="left:1644px;top:282px;width:273px;height:1px;background:#f0f0f0;"></div>
<div class="r" style="left:1758px;top:282px;width:1px;height:17px;background:#f0f0f0;"></div>
<div class="r" style="left:1644px;top:282px;width:114px;height:17px;overflow:hidden;">
<div class="t" style="left:3.5px;top:4.19px;font-size:11px;transform: scaleX(0.96);transform-origin:left top;">Bolt Details</div>
</div>
<div class="t" style="left:1761.5px;top:286.19px;font-size:11px;font-weight:bold;transform: scaleX(1.07);transform-origin:left top;">Grade 8.8 Bolts, 20 mm</div>
<div class="r" style="left:1623px;top:299px;width:294px;height:17px;background:#f0f0f0;"></div>
<div class="t" style="left:1648px;top:303.19px;font-size:11px;font-weight:bold;transform: scaleX(1.07);transform-origin:left top;">Beam Properties</div>
<div class="r" style="left:1623px;top:316px;width:21px;height:17px;background:#f0f0f0;"></div>
<div class="r" style="left:1644px;top:316px;width:273px;height:1px;background:#f0f0f0;"></div>
<div class="r" style="left:1758px;top:316px;width:1px;height:17px;background:#f0f0f0;"></div>
<div class="r" style="left:1644px;top:316px;width:114px;height:17px;overflow:hidden;">
<div class="t" style="left:3.5px;top:4.19px;font-size:11px;transform: scaleX(0.96);transform-origin:left top;">Beam Section</div>
</div>
<div class="t" style="left:1761.5px;top:320.19px;font-size:11px;font-weight:bold;transform: scaleX(1.07);transform-origin:left top;">457x191 UB 67, S 275</div>
<div class="r" style="left:1623px;top:333px;width:21px;height:17px;background:#f0f0f0;"></div>
<div class="r" style="left:1644px;top:333px;width:273px;height:1px;background:#f0f0f0;"></div>
<div class="r" style="left:1758px;top:333px;width:1px;height:17px;background:#f0f0f0;"></div>
<div class="r" style="left:1644px;top:333px;width:114px;height:17px;overflow:hidden;">
<div class="t" style="left:3.5px;top:4.19px;font-size:11px;transform: scaleX(0.96);transform-origin:left top;">Beam Left Projection</div>
</div>
<div class="t" style="left:1761.5px;top:337.19px;font-size:11px;font-weight:bold;transform: scaleX(1.07);transform-origin:left top;">250</div>
<div class="r" style="left:1623px;top:350px;width:21px;height:17px;background:#f0f0f0;"></div>
<div class="r" style="left:1644px;top:350px;width:273px;height:1px;background:#f0f0f0;"></div>
<div class="r" style="left:1758px;top:350px;width:1px;height:17px;background:#f0f0f0;"></div>
<div class="r" style="left:1644px;top:350px;width:114px;height:17px;overflow:hidden;">
<div class="t" style="left:3.5px;top:4.19px;font-size:11px;transform: scaleX(0.96);transform-origin:left top;">Beam Right Projection</div>
</div>
<div class="t" style="left:1761.5px;top:354.19px;font-size:11px;font-weight:bold;transform: scaleX(1.07);transform-origin:left top;">250</div>
<div class="r" style="left:1623px;top:367px;width:294px;height:17px;background:#f0f0f0;"></div>
<div class="t" style="left:1648px;top:371.19px;font-size:11px;font-weight:bold;transform: scaleX(1.07);transform-origin:left top;">Top Arrangement</div>
<div class="r" style="left:1623px;top:384px;width:21px;height:17px;background:#f0f0f0;"></div>
<div class="r" style="left:1644px;top:384px;width:273px;height:1px;background:#f0f0f0;"></div>
<div class="r" style="left:1758px;top:384px;width:1px;height:17px;background:#f0f0f0;"></div>
<div class="r" style="left:1644px;top:384px;width:114px;height:17px;overflow:hidden;">
<div class="t" style="left:3.5px;top:4.19px;font-size:11px;transform: scaleX(0.96);transform-origin:left top;">Top Arrangement</div>
</div>
<div class="t" style="left:1761.5px;top:388.19px;font-size:11px;font-weight:bold;transform: scaleX(1.07);transform-origin:left top;">Has Column</div>
<div class="r" style="left:1623px;top:401px;width:21px;height:17px;background:#f0f0f0;"></div>
<div class="r" style="left:1644px;top:401px;width:273px;height:1px;background:#f0f0f0;"></div>
<div class="r" style="left:1758px;top:401px;width:1px;height:17px;background:#f0f0f0;"></div>
<div class="r" style="left:1644px;top:402px;width:114px;height:16px;background:#0078d7;"></div>
<div class="r" style="left:1644px;top:401px;width:114px;height:17px;overflow:hidden;">
<div class="t" style="left:3.5px;top:4.19px;font-size:11px;color:#fff;transform: scaleX(0.96);transform-origin:left top;">Top Brace(s)</div>
</div>
<div class="t" style="left:1761.5px;top:405.19px;font-size:11px;font-weight:bold;transform: scaleX(1.07);transform-origin:left top;">Left and Right Brace</div>
<div class="r" style="left:1900px;top:402px;width:17px;height:16px;background:#e1e1e1;box-sizing:border-box;border:1px solid #adadad;"></div>
<svg class="r" style="left:1900px;top:402px;" width="17" height="16" viewBox="1900 402 17 16"><path d="M1904.5 409l3.5 3.5l3.5-3.5" fill="none" stroke="#404040" stroke-width="1.2"/></svg>
<div class="r" style="left:1623px;top:418px;width:294px;height:17px;background:#f0f0f0;"></div>
<div class="t" style="left:1648px;top:422.19px;font-size:11px;font-weight:bold;transform: scaleX(1.07);transform-origin:left top;">Top Column Properties</div>
<div class="r" style="left:1623px;top:435px;width:21px;height:17px;background:#f0f0f0;"></div>
<div class="r" style="left:1644px;top:435px;width:273px;height:1px;background:#f0f0f0;"></div>
<div class="r" style="left:1758px;top:435px;width:1px;height:17px;background:#f0f0f0;"></div>
<div class="r" style="left:1644px;top:435px;width:114px;height:17px;overflow:hidden;">
<div class="t" style="left:3.5px;top:4.19px;font-size:11px;transform: scaleX(0.96);transform-origin:left top;">Top Column Section</div>
</div>
<div class="t" style="left:1761.5px;top:439.19px;font-size:11px;font-weight:bold;transform: scaleX(1.07);transform-origin:left top;">457x191 UB 67, S 275</div>
<div class="r" style="left:1623px;top:452px;width:21px;height:17px;background:#f0f0f0;"></div>
<div class="r" style="left:1644px;top:452px;width:273px;height:1px;background:#f0f0f0;"></div>
<div class="r" style="left:1758px;top:452px;width:1px;height:17px;background:#f0f0f0;"></div>
<div class="r" style="left:1644px;top:452px;width:114px;height:17px;overflow:hidden;">
<div class="t" style="left:3.5px;top:4.19px;font-size:11px;transform: scaleX(0.96);transform-origin:left top;">Top End Plate Dimensions</div>
</div>
<div class="t" style="left:1761.5px;top:456.19px;font-size:11px;font-weight:bold;transform: scaleX(1.07);transform-origin:left top;">tk 20 mm</div>
<div class="r" style="left:1623px;top:469px;width:21px;height:17px;background:#f0f0f0;"></div>
<div class="r" style="left:1644px;top:469px;width:273px;height:1px;background:#f0f0f0;"></div>
<div class="r" style="left:1758px;top:469px;width:1px;height:17px;background:#f0f0f0;"></div>
<div class="r" style="left:1644px;top:469px;width:114px;height:17px;overflow:hidden;">
<div class="t" style="left:3.5px;top:4.19px;font-size:11px;transform: scaleX(0.96);transform-origin:left top;">Top End Plate Projections</div>
</div>
<div class="t" style="left:1761.5px;top:473.19px;font-size:11px;font-weight:bold;transform: scaleX(1.07);transform-origin:left top;">Top 20 mm, Bot 20 mm</div>
<div class="r" style="left:1623px;top:486px;width:21px;height:17px;background:#f0f0f0;"></div>
<div class="r" style="left:1644px;top:486px;width:273px;height:1px;background:#f0f0f0;"></div>
<div class="r" style="left:1758px;top:486px;width:1px;height:17px;background:#f0f0f0;"></div>
<div class="r" style="left:1644px;top:486px;width:114px;height:17px;overflow:hidden;">
<div class="t" style="left:3.5px;top:4.19px;font-size:11px;transform: scaleX(0.96);transform-origin:left top;">Brace To Minor Axis</div>
</div>
<div class="t" style="left:1761.5px;top:490.19px;font-size:11px;font-weight:bold;transform: scaleX(1.07);transform-origin:left top;">No</div>
<div class="r" style="left:1623px;top:503px;width:294px;height:17px;background:#f0f0f0;"></div>
<div class="t" style="left:1648px;top:507.19px;font-size:11px;font-weight:bold;transform: scaleX(1.07);transform-origin:left top;">Top Gusset(s)</div>
<div class="r" style="left:1623px;top:520px;width:21px;height:17px;background:#f0f0f0;"></div>
<div class="r" style="left:1644px;top:520px;width:273px;height:1px;background:#f0f0f0;"></div>
<div class="r" style="left:1758px;top:520px;width:1px;height:17px;background:#f0f0f0;"></div>
<div class="r" style="left:1644px;top:520px;width:114px;height:17px;overflow:hidden;">
<div class="t" style="left:3.5px;top:4.19px;font-size:11px;transform: scaleX(0.96);transform-origin:left top;">Left Gusset</div>
</div>
<div class="r" style="left:1623px;top:537px;width:21px;height:17px;background:#f0f0f0;"></div>
<div class="r" style="left:1644px;top:537px;width:273px;height:1px;background:#f0f0f0;"></div>
<div class="r" style="left:1758px;top:537px;width:1px;height:17px;background:#f0f0f0;"></div>
<div class="r" style="left:1644px;top:537px;width:114px;height:17px;overflow:hidden;">
<div class="t" style="left:3.5px;top:4.19px;font-size:11px;transform: scaleX(0.96);transform-origin:left top;">Right Gusset</div>
</div>
<div class="r" style="left:1623px;top:554px;width:21px;height:17px;background:#f0f0f0;"></div>
<div class="r" style="left:1644px;top:554px;width:273px;height:1px;background:#f0f0f0;"></div>
<div class="r" style="left:1758px;top:554px;width:1px;height:17px;background:#f0f0f0;"></div>
<div class="r" style="left:1644px;top:554px;width:114px;height:17px;overflow:hidden;">
<div class="t" style="left:3.5px;top:4.19px;font-size:11px;transform: scaleX(0.96);transform-origin:left top;">Top Gusset Welds</div>
</div>
<div class="t" style="left:1761.5px;top:558.19px;font-size:11px;font-weight:bold;transform: scaleX(1.07);transform-origin:left top;">Default</div>
<div class="r" style="left:1623px;top:571px;width:21px;height:17px;background:#f0f0f0;"></div>
<div class="r" style="left:1644px;top:571px;width:273px;height:1px;background:#f0f0f0;"></div>
<div class="r" style="left:1758px;top:571px;width:1px;height:17px;background:#f0f0f0;"></div>
<div class="r" style="left:1644px;top:571px;width:114px;height:17px;overflow:hidden;">
<div class="t" style="left:24px;top:4.19px;font-size:11px;transform: scaleX(0.96);transform-origin:left top;">Full butt weld</div>
</div>
<div class="t" style="left:1761.5px;top:575.19px;font-size:11px;transform: scaleX(0.96);transform-origin:left top;">No</div>
<div class="r" style="left:1623px;top:588px;width:21px;height:17px;background:#f0f0f0;"></div>
<div class="r" style="left:1644px;top:588px;width:273px;height:1px;background:#f0f0f0;"></div>
<div class="r" style="left:1758px;top:588px;width:1px;height:17px;background:#f0f0f0;"></div>
<div class="r" style="left:1644px;top:588px;width:114px;height:17px;overflow:hidden;">
<div class="t" style="left:24px;top:4.19px;font-size:11px;transform: scaleX(0.96);transform-origin:left top;">Weld size</div>
</div>
<div class="t" style="left:1761.5px;top:592.19px;font-size:11px;transform: scaleX(0.96);transform-origin:left top;">0</div>
<div class="r" style="left:1623px;top:605px;width:21px;height:17px;background:#f0f0f0;"></div>
<div class="r" style="left:1644px;top:605px;width:273px;height:1px;background:#f0f0f0;"></div>
<div class="r" style="left:1758px;top:605px;width:1px;height:17px;background:#f0f0f0;"></div>
<div class="r" style="left:1644px;top:605px;width:114px;height:17px;overflow:hidden;">
<div class="t" style="left:24px;top:4.19px;font-size:11px;transform: scaleX(0.96);transform-origin:left top;">Deep fillet pen</div>
</div>
<div class="t" style="left:1761.5px;top:609.19px;font-size:11px;transform: scaleX(0.96);transform-origin:left top;">0</div>
<div class="r" style="left:1623px;top:622px;width:294px;height:17px;background:#f0f0f0;"></div>
<div class="t" style="left:1648px;top:626.19px;font-size:11px;font-weight:bold;transform: scaleX(1.07);transform-origin:left top;">Top Brace(s)</div>
<div class="r" style="left:1623px;top:639px;width:21px;height:17px;background:#f0f0f0;"></div>
<div class="r" style="left:1644px;top:639px;width:273px;height:1px;background:#f0f0f0;"></div>
<div class="r" style="left:1758px;top:639px;width:1px;height:17px;background:#f0f0f0;"></div>
<div class="r" style="left:1644px;top:639px;width:114px;height:17px;overflow:hidden;">
<div class="t" style="left:3.5px;top:4.19px;font-size:11px;transform: scaleX(0.96);transform-origin:left top;">Top Left Brace</div>
</div>
<div class="r" style="left:1623px;top:656px;width:21px;height:17px;background:#f0f0f0;"></div>
<div class="r" style="left:1644px;top:656px;width:273px;height:1px;background:#f0f0f0;"></div>
<div class="r" style="left:1758px;top:656px;width:1px;height:17px;background:#f0f0f0;"></div>
<div class="r" style="left:1644px;top:656px;width:114px;height:17px;overflow:hidden;">
<div class="t" style="left:3.5px;top:4.19px;font-size:11px;transform: scaleX(0.96);transform-origin:left top;">Top Right Brace</div>
</div>
<div class="r" style="left:1623px;top:673px;width:294px;height:17px;background:#f0f0f0;"></div>
<div class="t" style="left:1648px;top:677.19px;font-size:11px;font-weight:bold;transform: scaleX(1.07);transform-origin:left top;">Bottom Arrangement</div>
<div class="r" style="left:1623px;top:690px;width:21px;height:17px;background:#f0f0f0;"></div>
<div class="r" style="left:1644px;top:690px;width:273px;height:1px;background:#f0f0f0;"></div>
<div class="r" style="left:1758px;top:690px;width:1px;height:17px;background:#f0f0f0;"></div>
<div class="r" style="left:1644px;top:690px;width:114px;height:17px;overflow:hidden;">
<div class="t" style="left:3.5px;top:4.19px;font-size:11px;transform: scaleX(0.96);transform-origin:left top;">Bottom Arrangement</div>
</div>
<div class="t" style="left:1761.5px;top:694.19px;font-size:11px;font-weight:bold;transform: scaleX(1.07);transform-origin:left top;">Has Gusset Only</div>
<div class="r" style="left:1623px;top:707px;width:21px;height:17px;background:#f0f0f0;"></div>
<div class="r" style="left:1644px;top:707px;width:273px;height:1px;background:#f0f0f0;"></div>
<div class="r" style="left:1758px;top:707px;width:1px;height:17px;background:#f0f0f0;"></div>
<div class="r" style="left:1644px;top:707px;width:114px;height:17px;overflow:hidden;">
<div class="t" style="left:3.5px;top:4.19px;font-size:11px;transform: scaleX(0.96);transform-origin:left top;">Has Bottom Left Brace</div>
</div>
<div class="t" style="left:1761.5px;top:711.19px;font-size:11px;font-weight:bold;transform: scaleX(1.07);transform-origin:left top;">Yes</div>
<div class="r" style="left:1623px;top:724px;width:21px;height:17px;background:#f0f0f0;"></div>
<div class="r" style="left:1644px;top:724px;width:273px;height:1px;background:#f0f0f0;"></div>
<div class="r" style="left:1758px;top:724px;width:1px;height:17px;background:#f0f0f0;"></div>
<div class="r" style="left:1644px;top:724px;width:114px;height:17px;overflow:hidden;">
<div class="t" style="left:3.5px;top:4.19px;font-size:11px;transform: scaleX(0.96);transform-origin:left top;">Has Bottom Middle Brace</div>
</div>
<div class="t" style="left:1761.5px;top:728.19px;font-size:11px;font-weight:bold;transform: scaleX(1.07);transform-origin:left top;">Yes</div>
<div class="r" style="left:1623px;top:741px;width:21px;height:17px;background:#f0f0f0;"></div>
<div class="r" style="left:1644px;top:741px;width:273px;height:1px;background:#f0f0f0;"></div>
<div class="r" style="left:1758px;top:741px;width:1px;height:17px;background:#f0f0f0;"></div>
<div class="r" style="left:1644px;top:741px;width:114px;height:17px;overflow:hidden;">
<div class="t" style="left:3.5px;top:4.19px;font-size:11px;transform: scaleX(0.96);transform-origin:left top;">Has Bottom Right Brace</div>
</div>
<div class="t" style="left:1761.5px;top:745.19px;font-size:11px;font-weight:bold;transform: scaleX(1.07);transform-origin:left top;">Yes</div>
<div class="r" style="left:1623px;top:758px;width:294px;height:17px;background:#f0f0f0;"></div>
<div class="t" style="left:1648px;top:762.19px;font-size:11px;font-weight:bold;transform: scaleX(1.07);transform-origin:left top;">Bottom Gusset(s)</div>
<div class="r" style="left:1623px;top:775px;width:21px;height:17px;background:#f0f0f0;"></div>
<div class="r" style="left:1644px;top:775px;width:273px;height:1px;background:#f0f0f0;"></div>
<div class="r" style="left:1758px;top:775px;width:1px;height:17px;background:#f0f0f0;"></div>
<div class="r" style="left:1644px;top:775px;width:114px;height:17px;overflow:hidden;">
<div class="t" style="left:3.5px;top:4.19px;font-size:11px;transform: scaleX(0.96);transform-origin:left top;">Bottom Gusset</div>
</div>
<div class="r" style="left:1623px;top:792px;width:21px;height:17px;background:#f0f0f0;"></div>
<div class="r" style="left:1644px;top:792px;width:273px;height:1px;background:#f0f0f0;"></div>
<div class="r" style="left:1758px;top:792px;width:1px;height:17px;background:#f0f0f0;"></div>
<div class="r" style="left:1644px;top:792px;width:114px;height:17px;overflow:hidden;">
<div class="t" style="left:3.5px;top:4.19px;font-size:11px;transform: scaleX(0.96);transform-origin:left top;">Bottom Gusset Welds</div>
</div>
<div class="t" style="left:1761.5px;top:796.19px;font-size:11px;font-weight:bold;transform: scaleX(1.07);transform-origin:left top;">Default</div>
<div class="r" style="left:1623px;top:809px;width:294px;height:17px;background:#f0f0f0;"></div>
<div class="t" style="left:1648px;top:813.19px;font-size:11px;font-weight:bold;transform: scaleX(1.07);transform-origin:left top;">Bottom Brace(s)</div>
<div class="r" style="left:1623px;top:826px;width:21px;height:17px;background:#f0f0f0;"></div>
<div class="r" style="left:1644px;top:826px;width:273px;height:1px;background:#f0f0f0;"></div>
<div class="r" style="left:1758px;top:826px;width:1px;height:17px;background:#f0f0f0;"></div>
<div class="r" style="left:1644px;top:826px;width:114px;height:17px;overflow:hidden;">
<div class="t" style="left:3.5px;top:4.19px;font-size:11px;transform: scaleX(0.96);transform-origin:left top;">Bottom Left Brace</div>
</div>
<div class="r" style="left:1623px;top:843px;width:21px;height:17px;background:#f0f0f0;"></div>
<div class="r" style="left:1644px;top:843px;width:273px;height:1px;background:#f0f0f0;"></div>
<div class="r" style="left:1758px;top:843px;width:1px;height:17px;background:#f0f0f0;"></div>
<div class="r" style="left:1644px;top:843px;width:114px;height:17px;overflow:hidden;">
<div class="t" style="left:3.5px;top:4.19px;font-size:11px;transform: scaleX(0.96);transform-origin:left top;">Bottom Middle Brace</div>
</div>
<div class="r" style="left:1623px;top:860px;width:21px;height:17px;background:#f0f0f0;"></div>
<div class="r" style="left:1644px;top:860px;width:273px;height:1px;background:#f0f0f0;"></div>
<div class="r" style="left:1758px;top:860px;width:1px;height:17px;background:#f0f0f0;"></div>
<div class="r" style="left:1644px;top:860px;width:114px;height:17px;overflow:hidden;">
<div class="t" style="left:3.5px;top:4.19px;font-size:11px;transform: scaleX(0.96);transform-origin:left top;">Bottom Right Brace</div>
</div>
<svg class="r" style="left:1622px;top:197px;" width="30" height="700" viewBox="1622 197 30 700"><path d="M1628.5 203.5l4 4l4-4" fill="none" stroke="#404040" stroke-width="1.7"/><path d="M1630 287l3.5 3.5l-3.5 3.5" fill="none" stroke="#8a8a8a" stroke-width="1.3"/><path d="M1628.5 305.5l4 4l4-4" fill="none" stroke="#404040" stroke-width="1.7"/><path d="M1630 321l3.5 3.5l-3.5 3.5" fill="none" stroke="#8a8a8a" stroke-width="1.3"/><path d="M1628.5 373.5l4 4l4-4" fill="none" stroke="#404040" stroke-width="1.7"/><path d="M1628.5 424.5l4 4l4-4" fill="none" stroke="#404040" stroke-width="1.7"/><path d="M1630 440l3.5 3.5l-3.5 3.5" fill="none" stroke="#8a8a8a" stroke-width="1.3"/><path d="M1630 457l3.5 3.5l-3.5 3.5" fill="none" stroke="#8a8a8a" stroke-width="1.3"/><path d="M1630 474l3.5 3.5l-3.5 3.5" fill="none" stroke="#8a8a8a" stroke-width="1.3"/><path d="M1628.5 509.5l4 4l4-4" fill="none" stroke="#404040" stroke-width="1.7"/><path d="M1630 525l3.5 3.5l-3.5 3.5" fill="none" stroke="#8a8a8a" stroke-width="1.3"/><path d="M1630 542l3.5 3.5l-3.5 3.5" fill="none" stroke="#8a8a8a" stroke-width="1.3"/><path d="M1628.5 560.5l4 4l4-4" fill="none" stroke="#404040" stroke-width="1.7"/><path d="M1628.5 628.5l4 4l4-4" fill="none" stroke="#404040" stroke-width="1.7"/><path d="M1630 644l3.5 3.5l-3.5 3.5" fill="none" stroke="#8a8a8a" stroke-width="1.3"/><path d="M1630 661l3.5 3.5l-3.5 3.5" fill="none" stroke="#8a8a8a" stroke-width="1.3"/><path d="M1628.5 679.5l4 4l4-4" fill="none" stroke="#404040" stroke-width="1.7"/><path d="M1628.5 764.5l4 4l4-4" fill="none" stroke="#404040" stroke-width="1.7"/><path d="M1630 780l3.5 3.5l-3.5 3.5" fill="none" stroke="#8a8a8a" stroke-width="1.3"/><path d="M1630 797l3.5 3.5l-3.5 3.5" fill="none" stroke="#8a8a8a" stroke-width="1.3"/><path d="M1628.5 815.5l4 4l4-4" fill="none" stroke="#404040" stroke-width="1.7"/><path d="M1630 831l3.5 3.5l-3.5 3.5" fill="none" stroke="#8a8a8a" stroke-width="1.3"/><path d="M1630 848l3.5 3.5l-3.5 3.5" fill="none" stroke="#8a8a8a" stroke-width="1.3"/><path d="M1630 865l3.5 3.5l-3.5 3.5" fill="none" stroke="#8a8a8a" stroke-width="1.3"/></svg>
<div class="t" style="left:1628px;top:1082.49px;font-size:11px;font-weight:bold;transform: scaleX(1.07);transform-origin:left top;">Top Brace(s)</div>
<div class="t" style="left:1627.5px;top:1097.99px;font-size:11px;">The bracing arrangement for the top side of the beam.</div>
<svg class="r" style="left:645px;top:173px;" width="966" height="928" viewBox="645 173 966 928"><g font-family="Liberation Sans, sans-serif"><polygon points="845.50,513.50 1411.50,513.50 1411.50,683.50 845.50,683.50" fill="#90ee90" stroke="#000" stroke-width="1" /><polygon points="845.50,513.50 1411.50,513.50 1411.50,518.50 845.50,518.50" fill="#008000" stroke="#000" stroke-width="1" /><polygon points="845.50,678.50 1411.50,678.50 1411.50,683.50 845.50,683.50" fill="#008000" stroke="#000" stroke-width="1" /><polygon points="938.50,506.00 1318.00,506.00 1318.00,513.50 938.50,513.50" fill="#fff99a" stroke="#000" stroke-width="1" /><polygon points="1043.50,318.50 1213.50,318.50 1213.50,506.00 1043.50,506.00" fill="#90ee90" stroke="#000" stroke-width="1" /><polygon points="1043.50,318.50 1048.50,318.50 1048.50,506.00 1043.50,506.00" fill="#008000" stroke="#000" stroke-width="1" /><polygon points="1208.50,318.50 1213.50,318.50 1213.50,506.00 1208.50,506.00" fill="#008000" stroke="#000" stroke-width="1" /><polygon points="1043.50,416.20 977.20,416.20 946.40,447.00 946.40,506.00 1043.50,506.00" fill="#d3d3d3" stroke="#000" stroke-width="1" /><polygon points="1213.50,416.20 1279.80,416.20 1310.60,447.00 1310.60,506.00 1213.50,506.00" fill="#d3d3d3" stroke="#000" stroke-width="1" /><polygon points="954.50,684.00 1302.50,684.00 1302.50,741.30 1271.00,772.80 986.00,772.80 954.50,741.30" fill="#d3d3d3" stroke="#000" stroke-width="1" /><line x1="1041.50" y1="417.00" x2="1041.50" y2="503.50" stroke="#ff00ff" stroke-width="1.3" stroke-dasharray="4,2.5"/><line x1="947.00" y1="503.50" x2="1043.00" y2="503.50" stroke="#ff00ff" stroke-width="1.3" stroke-dasharray="4,2.5"/><line x1="1215.50" y1="417.00" x2="1215.50" y2="503.50" stroke="#ff00ff" stroke-width="1.3" stroke-dasharray="4,2.5"/><line x1="1214.00" y1="503.50" x2="1310.00" y2="503.50" stroke="#ff00ff" stroke-width="1.3" stroke-dasharray="4,2.5"/><line x1="955.00" y1="686.50" x2="1302.00" y2="686.50" stroke="#ff00ff" stroke-width="1.3" stroke-dasharray="4,2.5"/><polygon points="995.71,487.06 863.97,355.33 885.33,333.97 1017.06,465.71" fill="#90ee90" stroke="#000" stroke-width="1" /><polygon points="1239.94,465.71 1371.67,333.97 1393.03,355.33 1261.29,487.06" fill="#90ee90" stroke="#000" stroke-width="1" /><polygon points="1024.77,723.59 892.68,855.67 871.33,834.32 1003.41,702.23" fill="#90ee90" stroke="#000" stroke-width="1" /><polygon points="1253.59,702.23 1385.67,834.32 1364.32,855.67 1232.23,723.59" fill="#90ee90" stroke="#000" stroke-width="1" /><polygon points="1143.60,709.30 1143.60,896.60 1113.40,896.60 1113.40,709.30" fill="#90ee90" stroke="#000" stroke-width="1" /><line x1="826.00" y1="598.50" x2="1432.00" y2="598.50" stroke="#8a8a8a" stroke-width="1.2" stroke-dasharray="9,5,1.3,4.7"/><line x1="1128.50" y1="300.00" x2="1128.50" y2="913.00" stroke="#8a8a8a" stroke-width="1.2" stroke-dasharray="9,5,1.3,4.7"/><line x1="1128.50" y1="598.50" x2="861.92" y2="331.92" stroke="#8a8a8a" stroke-width="1.2" stroke-dasharray="9,5,1.3,4.7"/><line x1="1128.50" y1="598.50" x2="1395.08" y2="331.92" stroke="#8a8a8a" stroke-width="1.2" stroke-dasharray="9,5,1.3,4.7"/><line x1="1128.50" y1="598.50" x2="869.70" y2="857.30" stroke="#8a8a8a" stroke-width="1.2" stroke-dasharray="9,5,1.3,4.7"/><line x1="1128.50" y1="598.50" x2="1387.30" y2="857.30" stroke="#8a8a8a" stroke-width="1.2" stroke-dasharray="9,5,1.3,4.7"/><circle cx="993.94" cy="463.94" r="4.2" fill="#fff" stroke="#0000ff" stroke-width="1.3"/><circle cx="977.82" cy="447.82" r="4.2" fill="#fff" stroke="#0000ff" stroke-width="1.3"/><circle cx="1263.06" cy="463.94" r="4.2" fill="#fff" stroke="#0000ff" stroke-width="1.3"/><circle cx="1279.18" cy="447.82" r="4.2" fill="#fff" stroke="#0000ff" stroke-width="1.3"/><circle cx="1001.22" cy="725.78" r="4.2" fill="#fff" stroke="#0000ff" stroke-width="1.3"/><circle cx="985.38" cy="741.62" r="4.2" fill="#fff" stroke="#0000ff" stroke-width="1.3"/><circle cx="1255.78" cy="725.78" r="4.2" fill="#fff" stroke="#0000ff" stroke-width="1.3"/><circle cx="1271.62" cy="741.62" r="4.2" fill="#fff" stroke="#0000ff" stroke-width="1.3"/><circle cx="1128.50" cy="728.00" r="4.2" fill="#fff" stroke="#0000ff" stroke-width="1.3"/><circle cx="1128.50" cy="750.30" r="4.2" fill="#fff" stroke="#0000ff" stroke-width="1.3"/><line x1="1144.76" y1="582.24" x2="994.08" y2="431.55" stroke="#000" stroke-width="1" /><line x1="1144.76" y1="582.24" x2="1139.18" y2="587.82" stroke="#000" stroke-width="1" /><circle cx="1144.76" cy="582.24" r="1.1" fill="#000"/><line x1="1051.71" y1="489.18" x2="1046.12" y2="494.77" stroke="#000" stroke-width="1" /><circle cx="1051.71" cy="489.18" r="1.1" fill="#000"/><line x1="1022.65" y1="460.12" x2="1017.06" y2="465.71" stroke="#000" stroke-width="1" /><circle cx="1022.65" cy="460.12" r="1.1" fill="#000"/><line x1="1010.20" y1="447.67" x2="1004.61" y2="453.26" stroke="#000" stroke-width="1" /><circle cx="1010.20" cy="447.67" r="1.1" fill="#000"/><line x1="994.08" y1="431.55" x2="988.49" y2="437.14" stroke="#000" stroke-width="1" /><circle cx="994.08" cy="431.55" r="1.1" fill="#000"/><text transform="translate(1103.04,530.90) rotate(45) scale(0.9,1)" text-anchor="middle" dominant-baseline="central" font-size="9.5" fill="#000">349</text><text transform="translate(1041.99,469.84) rotate(45) scale(0.9,1)" text-anchor="middle" dominant-baseline="central" font-size="9.5" fill="#000">111</text><text transform="translate(1021.23,449.09) rotate(45) scale(0.9,1)" text-anchor="middle" dominant-baseline="central" font-size="9.5" fill="#000">50</text><text transform="translate(1006.95,434.80) rotate(45) scale(0.9,1)" text-anchor="middle" dominant-baseline="central" font-size="9.5" fill="#000">60</text><line x1="1002.28" y1="493.64" x2="1023.64" y2="472.28" stroke="#000" stroke-width="1" /><line x1="995.71" y1="487.06" x2="1002.28" y2="493.64" stroke="#000" stroke-width="1" /><circle cx="1002.28" cy="493.64" r="1.1" fill="#000"/><line x1="1017.06" y1="465.71" x2="1023.64" y2="472.28" stroke="#000" stroke-width="1" /><circle cx="1023.64" cy="472.28" r="1.1" fill="#000"/><line x1="1008.43" y1="478.43" x2="1012.96" y2="482.96" stroke="#000" stroke-width="1" /><circle cx="1012.96" cy="482.96" r="1.1" fill="#000"/><text transform="translate(1012.32,492.93) rotate(45) scale(0.9,1)" text-anchor="middle" dominant-baseline="central" font-size="9.5" fill="#000">40</text><text transform="translate(1022.93,482.32) rotate(45) scale(0.9,1)" text-anchor="middle" dominant-baseline="central" font-size="9.5" fill="#000">40</text><text transform="translate(921.78,400.76) rotate(45) scale(0.925,1)" text-anchor="middle" dominant-baseline="central" font-size="10" fill="#000">80x12 Flat 7.536 [S 275] @ 135°</text><line x1="1144.76" y1="614.76" x2="1295.45" y2="464.08" stroke="#000" stroke-width="1" /><line x1="1144.76" y1="614.76" x2="1139.18" y2="609.18" stroke="#000" stroke-width="1" /><circle cx="1144.76" cy="614.76" r="1.1" fill="#000"/><line x1="1237.82" y1="521.71" x2="1232.23" y2="516.12" stroke="#000" stroke-width="1" /><circle cx="1237.82" cy="521.71" r="1.1" fill="#000"/><line x1="1266.88" y1="492.65" x2="1261.29" y2="487.06" stroke="#000" stroke-width="1" /><circle cx="1266.88" cy="492.65" r="1.1" fill="#000"/><line x1="1279.33" y1="480.20" x2="1273.74" y2="474.61" stroke="#000" stroke-width="1" /><circle cx="1279.33" cy="480.20" r="1.1" fill="#000"/><line x1="1295.45" y1="464.08" x2="1289.86" y2="458.49" stroke="#000" stroke-width="1" /><circle cx="1295.45" cy="464.08" r="1.1" fill="#000"/><text transform="translate(1196.10,573.04) rotate(-45) scale(0.9,1)" text-anchor="middle" dominant-baseline="central" font-size="9.5" fill="#000">349</text><text transform="translate(1257.16,511.99) rotate(-45) scale(0.9,1)" text-anchor="middle" dominant-baseline="central" font-size="9.5" fill="#000">111</text><text transform="translate(1277.91,491.23) rotate(-45) scale(0.9,1)" text-anchor="middle" dominant-baseline="central" font-size="9.5" fill="#000">50</text><text transform="translate(1292.20,476.95) rotate(-45) scale(0.9,1)" text-anchor="middle" dominant-baseline="central" font-size="9.5" fill="#000">60</text><line x1="1233.36" y1="472.28" x2="1254.72" y2="493.64" stroke="#000" stroke-width="1" /><line x1="1239.94" y1="465.71" x2="1233.36" y2="472.28" stroke="#000" stroke-width="1" /><circle cx="1233.36" cy="472.28" r="1.1" fill="#000"/><line x1="1261.29" y1="487.06" x2="1254.72" y2="493.64" stroke="#000" stroke-width="1" /><circle cx="1254.72" cy="493.64" r="1.1" fill="#000"/><line x1="1248.57" y1="478.43" x2="1244.04" y2="482.96" stroke="#000" stroke-width="1" /><circle cx="1244.04" cy="482.96" r="1.1" fill="#000"/><text transform="translate(1234.07,482.32) rotate(-45) scale(0.9,1)" text-anchor="middle" dominant-baseline="central" font-size="9.5" fill="#000">40</text><text transform="translate(1244.68,492.93) rotate(-45) scale(0.9,1)" text-anchor="middle" dominant-baseline="central" font-size="9.5" fill="#000">40</text><text transform="translate(1324.16,390.82) rotate(-45) scale(0.925,1)" text-anchor="middle" dominant-baseline="central" font-size="10" fill="#000">80x12 Flat 7.536 [S 275] @ 45°</text><line x1="1112.24" y1="582.24" x2="969.12" y2="725.35" stroke="#000" stroke-width="1" /><line x1="1112.24" y1="582.24" x2="1117.82" y2="587.82" stroke="#000" stroke-width="1" /><circle cx="1112.24" cy="582.24" r="1.1" fill="#000"/><line x1="1026.68" y1="667.80" x2="1032.26" y2="673.38" stroke="#000" stroke-width="1" /><circle cx="1026.68" cy="667.80" r="1.1" fill="#000"/><line x1="997.83" y1="696.65" x2="1003.41" y2="702.23" stroke="#000" stroke-width="1" /><circle cx="997.83" cy="696.65" r="1.1" fill="#000"/><line x1="984.96" y1="709.52" x2="990.54" y2="715.10" stroke="#000" stroke-width="1" /><circle cx="984.96" cy="709.52" r="1.1" fill="#000"/><line x1="969.12" y1="725.35" x2="974.70" y2="730.94" stroke="#000" stroke-width="1" /><circle cx="969.12" cy="725.35" r="1.1" fill="#000"/><text transform="translate(1064.65,620.21) rotate(-45) scale(0.9,1)" text-anchor="middle" dominant-baseline="central" font-size="9.5" fill="#000">321</text><text transform="translate(1007.44,677.41) rotate(-45) scale(0.9,1)" text-anchor="middle" dominant-baseline="central" font-size="9.5" fill="#000">111</text><text transform="translate(986.58,698.27) rotate(-45) scale(0.9,1)" text-anchor="middle" dominant-baseline="central" font-size="9.5" fill="#000">50</text><text transform="translate(972.23,712.63) rotate(-45) scale(0.9,1)" text-anchor="middle" dominant-baseline="central" font-size="9.5" fill="#000">60</text><line x1="1031.34" y1="717.01" x2="1009.99" y2="695.66" stroke="#000" stroke-width="1" /><line x1="1024.77" y1="723.59" x2="1031.34" y2="717.01" stroke="#000" stroke-width="1" /><circle cx="1031.34" cy="717.01" r="1.1" fill="#000"/><line x1="1003.41" y1="702.23" x2="1009.99" y2="695.66" stroke="#000" stroke-width="1" /><circle cx="1009.99" cy="695.66" r="1.1" fill="#000"/><line x1="1016.14" y1="710.86" x2="1020.67" y2="706.33" stroke="#000" stroke-width="1" /><circle cx="1020.67" cy="706.33" r="1.1" fill="#000"/><text transform="translate(1030.64,706.97) rotate(-45) scale(0.9,1)" text-anchor="middle" dominant-baseline="central" font-size="9.5" fill="#000">40</text><text transform="translate(1020.03,696.36) rotate(-45) scale(0.9,1)" text-anchor="middle" dominant-baseline="central" font-size="9.5" fill="#000">40</text><text transform="translate(938.04,796.24) rotate(-45) scale(0.925,1)" text-anchor="middle" dominant-baseline="central" font-size="10" fill="#000">80x12 Flat 7.536 [S 275] @ 225°</text><line x1="1112.24" y1="614.76" x2="1255.35" y2="757.88" stroke="#000" stroke-width="1" /><line x1="1112.24" y1="614.76" x2="1117.82" y2="609.18" stroke="#000" stroke-width="1" /><circle cx="1112.24" cy="614.76" r="1.1" fill="#000"/><line x1="1197.80" y1="700.32" x2="1203.38" y2="694.74" stroke="#000" stroke-width="1" /><circle cx="1197.80" cy="700.32" r="1.1" fill="#000"/><line x1="1226.65" y1="729.17" x2="1232.23" y2="723.59" stroke="#000" stroke-width="1" /><circle cx="1226.65" cy="729.17" r="1.1" fill="#000"/><line x1="1239.52" y1="742.04" x2="1245.10" y2="736.46" stroke="#000" stroke-width="1" /><circle cx="1239.52" cy="742.04" r="1.1" fill="#000"/><line x1="1255.35" y1="757.88" x2="1260.94" y2="752.30" stroke="#000" stroke-width="1" /><circle cx="1255.35" cy="757.88" r="1.1" fill="#000"/><text transform="translate(1150.21,662.35) rotate(45) scale(0.9,1)" text-anchor="middle" dominant-baseline="central" font-size="9.5" fill="#000">321</text><text transform="translate(1207.41,719.56) rotate(45) scale(0.9,1)" text-anchor="middle" dominant-baseline="central" font-size="9.5" fill="#000">111</text><text transform="translate(1228.27,740.42) rotate(45) scale(0.9,1)" text-anchor="middle" dominant-baseline="central" font-size="9.5" fill="#000">50</text><text transform="translate(1242.63,754.77) rotate(45) scale(0.9,1)" text-anchor="middle" dominant-baseline="central" font-size="9.5" fill="#000">60</text><line x1="1247.01" y1="695.66" x2="1225.66" y2="717.01" stroke="#000" stroke-width="1" /><line x1="1253.59" y1="702.23" x2="1247.01" y2="695.66" stroke="#000" stroke-width="1" /><circle cx="1247.01" cy="695.66" r="1.1" fill="#000"/><line x1="1232.23" y1="723.59" x2="1225.66" y2="717.01" stroke="#000" stroke-width="1" /><circle cx="1225.66" cy="717.01" r="1.1" fill="#000"/><line x1="1240.86" y1="710.86" x2="1236.33" y2="706.33" stroke="#000" stroke-width="1" /><circle cx="1236.33" cy="706.33" r="1.1" fill="#000"/><text transform="translate(1236.97,696.36) rotate(45) scale(0.9,1)" text-anchor="middle" dominant-baseline="central" font-size="9.5" fill="#000">40</text><text transform="translate(1226.36,706.97) rotate(45) scale(0.9,1)" text-anchor="middle" dominant-baseline="central" font-size="9.5" fill="#000">40</text><text transform="translate(1325.57,783.83) rotate(45) scale(0.925,1)" text-anchor="middle" dominant-baseline="central" font-size="10" fill="#000">80x12 Flat 7.536 [S 275] @ 315°</text><line x1="1105.50" y1="598.50" x2="1105.50" y2="750.30" stroke="#000" stroke-width="1" /><line x1="1105.50" y1="598.50" x2="1113.40" y2="598.50" stroke="#000" stroke-width="1" /><circle cx="1105.50" cy="598.50" r="1.1" fill="#000"/><line x1="1105.50" y1="684.10" x2="1113.40" y2="684.10" stroke="#000" stroke-width="1" /><circle cx="1105.50" cy="684.10" r="1.1" fill="#000"/><line x1="1105.50" y1="709.30" x2="1113.40" y2="709.30" stroke="#000" stroke-width="1" /><circle cx="1105.50" cy="709.30" r="1.1" fill="#000"/><line x1="1105.50" y1="728.00" x2="1113.40" y2="728.00" stroke="#000" stroke-width="1" /><circle cx="1105.50" cy="728.00" r="1.1" fill="#000"/><line x1="1105.50" y1="750.30" x2="1113.40" y2="750.30" stroke="#000" stroke-width="1" /><circle cx="1105.50" cy="750.30" r="1.1" fill="#000"/><text transform="translate(1098.70,641.30) rotate(90) scale(0.9,1)" text-anchor="middle" dominant-baseline="central" font-size="9.5" fill="#000">227</text><text transform="translate(1098.70,696.70) rotate(90) scale(0.9,1)" text-anchor="middle" dominant-baseline="central" font-size="9.5" fill="#000">70</text><text transform="translate(1098.70,718.65) rotate(90) scale(0.9,1)" text-anchor="middle" dominant-baseline="central" font-size="9.5" fill="#000">50</text><text transform="translate(1098.70,739.15) rotate(90) scale(0.9,1)" text-anchor="middle" dominant-baseline="central" font-size="9.5" fill="#000">60</text><line x1="1143.60" y1="700.00" x2="1113.40" y2="700.00" stroke="#000" stroke-width="1" /><line x1="1143.60" y1="709.30" x2="1143.60" y2="700.00" stroke="#000" stroke-width="1" /><circle cx="1143.60" cy="700.00" r="1.1" fill="#000"/><line x1="1113.40" y1="709.30" x2="1113.40" y2="700.00" stroke="#000" stroke-width="1" /><circle cx="1113.40" cy="700.00" r="1.1" fill="#000"/><line x1="1128.50" y1="706.40" x2="1128.50" y2="700.00" stroke="#000" stroke-width="1" /><circle cx="1128.50" cy="700.00" r="1.1" fill="#000"/><text transform="translate(1136.00,693.40) rotate(90) scale(0.9,1)" text-anchor="middle" dominant-baseline="central" font-size="9.5" fill="#000">40</text><text transform="translate(1121.00,693.40) rotate(90) scale(0.9,1)" text-anchor="middle" dominant-baseline="central" font-size="9.5" fill="#000">40</text><text transform="translate(1135.50,815.90) rotate(90) scale(0.925,1)" text-anchor="middle" dominant-baseline="central" font-size="10" fill="#000">80x12 Flat 7.536 [S 275] @ 270°</text><line x1="946.40" y1="346.00" x2="946.40" y2="402.00" stroke="#000" stroke-width="1" /><line x1="942.40" y1="363.80" x2="950.40" y2="355.80" stroke="#000" stroke-width="1" /><line x1="977.40" y1="346.00" x2="977.40" y2="402.00" stroke="#000" stroke-width="1" /><line x1="973.40" y1="363.80" x2="981.40" y2="355.80" stroke="#000" stroke-width="1" /><line x1="1043.40" y1="346.00" x2="1043.40" y2="402.00" stroke="#000" stroke-width="1" /><line x1="1039.40" y1="363.80" x2="1047.40" y2="355.80" stroke="#000" stroke-width="1" /><line x1="946.40" y1="359.80" x2="1043.40" y2="359.80" stroke="#000" stroke-width="1" /><text transform="translate(961.00,353.20) rotate(0) scale(0.9,1)" text-anchor="middle" dominant-baseline="central" font-size="9.5" fill="#000">83</text><text transform="translate(1010.00,353.20) rotate(0) scale(0.9,1)" text-anchor="middle" dominant-baseline="central" font-size="9.5" fill="#000">177</text><line x1="1213.60" y1="346.00" x2="1213.60" y2="402.00" stroke="#000" stroke-width="1" /><line x1="1209.60" y1="363.80" x2="1217.60" y2="355.80" stroke="#000" stroke-width="1" /><line x1="1279.50" y1="346.00" x2="1279.50" y2="402.00" stroke="#000" stroke-width="1" /><line x1="1275.50" y1="363.80" x2="1283.50" y2="355.80" stroke="#000" stroke-width="1" /><line x1="1310.60" y1="346.00" x2="1310.60" y2="402.00" stroke="#000" stroke-width="1" /><line x1="1306.60" y1="363.80" x2="1314.60" y2="355.80" stroke="#000" stroke-width="1" /><line x1="1213.60" y1="359.80" x2="1310.60" y2="359.80" stroke="#000" stroke-width="1" /><text transform="translate(1245.50,353.20) rotate(0) scale(0.9,1)" text-anchor="middle" dominant-baseline="central" font-size="9.5" fill="#000">177</text><text transform="translate(1295.00,353.20) rotate(0) scale(0.9,1)" text-anchor="middle" dominant-baseline="central" font-size="9.5" fill="#000">83</text><line x1="876.00" y1="415.80" x2="933.00" y2="415.80" stroke="#000" stroke-width="1" /><line x1="886.30" y1="419.80" x2="894.30" y2="411.80" stroke="#000" stroke-width="1" /><line x1="876.00" y1="447.20" x2="933.00" y2="447.20" stroke="#000" stroke-width="1" /><line x1="886.30" y1="451.20" x2="894.30" y2="443.20" stroke="#000" stroke-width="1" /><line x1="876.00" y1="505.80" x2="933.00" y2="505.80" stroke="#000" stroke-width="1" /><line x1="886.30" y1="509.80" x2="894.30" y2="501.80" stroke="#000" stroke-width="1" /><line x1="890.30" y1="415.80" x2="890.30" y2="505.80" stroke="#000" stroke-width="1" /><text transform="translate(882.00,431.70) rotate(0) scale(0.9,1)" text-anchor="middle" dominant-baseline="central" font-size="9.5" fill="#000">83</text><text transform="translate(880.00,476.20) rotate(0) scale(0.9,1)" text-anchor="middle" dominant-baseline="central" font-size="9.5" fill="#000">157</text><line x1="1324.50" y1="415.80" x2="1381.30" y2="415.80" stroke="#000" stroke-width="1" /><line x1="1362.90" y1="419.80" x2="1370.90" y2="411.80" stroke="#000" stroke-width="1" /><line x1="1324.50" y1="447.20" x2="1381.30" y2="447.20" stroke="#000" stroke-width="1" /><line x1="1362.90" y1="451.20" x2="1370.90" y2="443.20" stroke="#000" stroke-width="1" /><line x1="1324.50" y1="505.80" x2="1381.30" y2="505.80" stroke="#000" stroke-width="1" /><line x1="1362.90" y1="509.80" x2="1370.90" y2="501.80" stroke="#000" stroke-width="1" /><line x1="1366.90" y1="415.80" x2="1366.90" y2="505.80" stroke="#000" stroke-width="1" /><text transform="translate(1372.60,431.70) rotate(0) scale(0.9,1)" text-anchor="middle" dominant-baseline="central" font-size="9.5" fill="#000">83</text><text transform="translate(1375.10,476.20) rotate(0) scale(0.9,1)" text-anchor="middle" dominant-baseline="central" font-size="9.5" fill="#000">157</text><line x1="884.00" y1="683.50" x2="941.00" y2="683.50" stroke="#000" stroke-width="1" /><line x1="894.60" y1="687.50" x2="902.60" y2="679.50" stroke="#000" stroke-width="1" /><line x1="884.00" y1="742.40" x2="941.00" y2="742.40" stroke="#000" stroke-width="1" /><line x1="894.60" y1="746.40" x2="902.60" y2="738.40" stroke="#000" stroke-width="1" /><line x1="884.00" y1="772.80" x2="941.00" y2="772.80" stroke="#000" stroke-width="1" /><line x1="894.60" y1="776.80" x2="902.60" y2="768.80" stroke="#000" stroke-width="1" /><line x1="898.60" y1="683.50" x2="898.60" y2="772.80" stroke="#000" stroke-width="1" /><text transform="translate(887.60,712.80) rotate(0) scale(0.9,1)" text-anchor="middle" dominant-baseline="central" font-size="9.5" fill="#000">159</text><text transform="translate(890.30,758.00) rotate(0) scale(0.9,1)" text-anchor="middle" dominant-baseline="central" font-size="9.5" fill="#000">81</text><line x1="1316.20" y1="683.50" x2="1373.00" y2="683.50" stroke="#000" stroke-width="1" /><line x1="1354.60" y1="687.50" x2="1362.60" y2="679.50" stroke="#000" stroke-width="1" /><line x1="1316.20" y1="742.40" x2="1373.00" y2="742.40" stroke="#000" stroke-width="1" /><line x1="1354.60" y1="746.40" x2="1362.60" y2="738.40" stroke="#000" stroke-width="1" /><line x1="1316.20" y1="772.80" x2="1373.00" y2="772.80" stroke="#000" stroke-width="1" /><line x1="1354.60" y1="776.80" x2="1362.60" y2="768.80" stroke="#000" stroke-width="1" /><line x1="1358.60" y1="683.50" x2="1358.60" y2="772.80" stroke="#000" stroke-width="1" /><text transform="translate(1368.00,712.00) rotate(0) scale(0.9,1)" text-anchor="middle" dominant-baseline="central" font-size="9.5" fill="#000">159</text><text transform="translate(1363.80,758.00) rotate(0) scale(0.9,1)" text-anchor="middle" dominant-baseline="central" font-size="9.5" fill="#000">81</text><line x1="954.50" y1="787.00" x2="954.50" y2="843.00" stroke="#000" stroke-width="1" /><line x1="950.50" y1="832.90" x2="958.50" y2="824.90" stroke="#000" stroke-width="1" /><line x1="986.00" y1="787.00" x2="986.00" y2="843.00" stroke="#000" stroke-width="1" /><line x1="982.00" y1="832.90" x2="990.00" y2="824.90" stroke="#000" stroke-width="1" /><line x1="1272.00" y1="787.00" x2="1272.00" y2="843.00" stroke="#000" stroke-width="1" /><line x1="1268.00" y1="832.90" x2="1276.00" y2="824.90" stroke="#000" stroke-width="1" /><line x1="1302.30" y1="787.00" x2="1302.30" y2="843.00" stroke="#000" stroke-width="1" /><line x1="1298.30" y1="832.90" x2="1306.30" y2="824.90" stroke="#000" stroke-width="1" /><line x1="952.00" y1="828.90" x2="1306.00" y2="828.90" stroke="#000" stroke-width="1" /><text transform="translate(968.00,834.50) rotate(0) scale(0.9,1)" text-anchor="middle" dominant-baseline="central" font-size="9.5" fill="#000">81</text><text transform="translate(1126.70,834.50) rotate(0) scale(0.9,1)" text-anchor="middle" dominant-baseline="central" font-size="9.5" fill="#000">767</text><text transform="translate(1286.00,834.50) rotate(0) scale(0.9,1)" text-anchor="middle" dominant-baseline="central" font-size="9.5" fill="#000">81</text><line x1="1042.80" y1="667.00" x2="1042.80" y2="680.00" stroke="#000" stroke-width="1" /><line x1="1128.50" y1="667.00" x2="1128.50" y2="680.00" stroke="#000" stroke-width="1" /><line x1="1213.60" y1="667.00" x2="1213.60" y2="680.00" stroke="#000" stroke-width="1" /><line x1="1303.40" y1="667.00" x2="1303.40" y2="680.00" stroke="#000" stroke-width="1" /><line x1="1042.80" y1="671.10" x2="1303.40" y2="671.10" stroke="#000" stroke-width="1" /><text transform="translate(1084.80,665.30) rotate(0) scale(0.9,1)" text-anchor="middle" dominant-baseline="central" font-size="9.5" fill="#000">227</text><text transform="translate(1168.70,665.30) rotate(0) scale(0.9,1)" text-anchor="middle" dominant-baseline="central" font-size="9.5" fill="#000">227</text><text transform="translate(1255.90,665.30) rotate(0) scale(0.9,1)" text-anchor="middle" dominant-baseline="central" font-size="9.5" fill="#000">238</text><line x1="1036.00" y1="508.00" x2="1036.00" y2="518.00" stroke="#000" stroke-width="1" /><line x1="1043.50" y1="508.00" x2="1043.50" y2="518.00" stroke="#000" stroke-width="1" /><line x1="1036.00" y1="516.50" x2="1043.50" y2="516.50" stroke="#000" stroke-width="1" /><text transform="translate(1038.90,523.50) rotate(0) scale(0.9,1)" text-anchor="middle" dominant-baseline="central" font-size="9.5" fill="#000">20</text><line x1="1213.60" y1="508.00" x2="1213.60" y2="518.00" stroke="#000" stroke-width="1" /><line x1="1221.00" y1="508.00" x2="1221.00" y2="518.00" stroke="#000" stroke-width="1" /><line x1="1213.60" y1="516.50" x2="1221.00" y2="516.50" stroke="#000" stroke-width="1" /><text transform="translate(1217.50,523.50) rotate(0) scale(0.9,1)" text-anchor="middle" dominant-baseline="central" font-size="9.5" fill="#000">20</text><rect x="985.6" y="515.2" width="22" height="12" fill="#fff"/><text transform="translate(996.50,521.00) rotate(0) scale(0.9,1)" text-anchor="middle" dominant-baseline="central" font-size="9.5" fill="#0000ff">7 fw</text><path d="M1008.6 514.1V526.4L1014.8 520.3Z M1008.6 520.3H1026.5L1041.1 505.7" fill="none" stroke="#0000ff" stroke-width="1"/><text transform="translate(1264.00,520.00) rotate(0) scale(0.9,1)" text-anchor="middle" dominant-baseline="central" font-size="9.5" fill="#0000ff">7 fw</text><path d="M1247.9 514.1V526.4L1241.7 520.3Z M1241.7 520.3H1229.3L1215.8 506.2" fill="none" stroke="#0000ff" stroke-width="1"/><text transform="translate(908.30,699.50) rotate(0) scale(0.9,1)" text-anchor="middle" dominant-baseline="central" font-size="9.5" fill="#0000ff">7 fw</text><path d="M922.3 694.3V706.3L928 700.3Z M928 700.3H940.4L954.4 685.5" fill="none" stroke="#0000ff" stroke-width="1"/><text transform="translate(1054.00,314.80) rotate(0) scale(0.9,1)" text-anchor="start" font-size="10" fill="#000">457x191UB67 [S 275]</text><text transform="translate(850.70,674.40) rotate(0) scale(0.9,1)" text-anchor="start" font-size="10" fill="#000">457x191UB67 [S 275]</text><text transform="translate(1124.00,940.30) rotate(0) scale(0.92,1)" text-anchor="middle" font-size="10" fill="#000">Top Left Gusset: 260x240x10 [S 275]</text><text transform="translate(1124.00,955.50) rotate(0) scale(0.92,1)" text-anchor="middle" font-size="10" fill="#000">Top Right Gusset: 260x240x10 [S 275]</text><text transform="translate(1124.00,969.30) rotate(0) scale(0.92,1)" text-anchor="middle" font-size="10" fill="#000">Bottom Gusset: 930x240x10 [S 275]</text></g></svg>
</body></html>
